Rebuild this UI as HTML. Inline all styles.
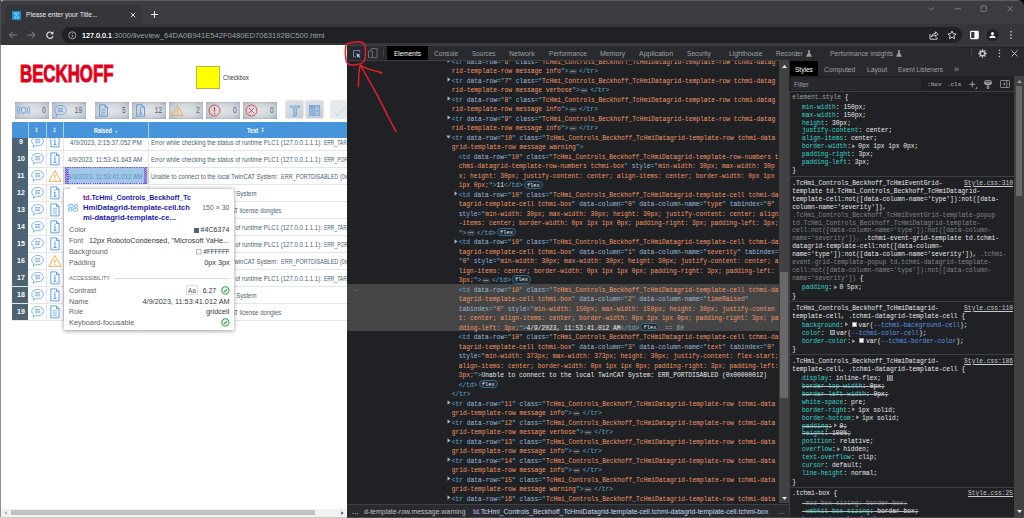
<!DOCTYPE html>
<html lang="en"><head><meta charset="utf-8"><title>Please enter your Title...</title>
<style>
html,body{margin:0;padding:0}
body{width:1024px;height:518px;overflow:hidden;position:relative;background:#202124;font-family:"Liberation Sans",sans-serif}
svg{display:block;overflow:visible}
span svg{display:block}
</style></head><body>
<div style="position:absolute;left:0.00px;top:0.00px;width:1024.00px;height:24.00px;background:#3a3c3f;"></div>
<div style="position:absolute;left:0.00px;top:24.00px;width:1024.00px;height:21.00px;background:#35363a;"></div>
<div style="position:absolute;left:0.00px;top:0.00px;width:1024.00px;height:1.00px;background:#5a5c5f;"></div>
<div style="position:absolute;left:5px;top:5px;width:137px;height:19px;background:#35363a;border-radius:4px 4px 0 0"></div>
<svg style="position:absolute;left:12px;top:10.5px" width="9" height="9" viewBox="0 0 9 9"><rect width="9" height="9" rx="1" fill="#1697d8"/><path d="M2 2.2h5M2 6.8h5M2.2 2.5l2.3 2 2.3-2M2.2 6.5l2.3-2 2.3 2" stroke="#cfeaf8" stroke-width=".7" fill="none"/></svg>
<span style="position:absolute;left:26.00px;transform-origin:0 50%;top:11.41px;font:400 6.6px/8.58px 'Liberation Sans',sans-serif;color:#e8eaed;white-space:pre;transform:scaleX(1.005);">Please enter your Title...</span>
<svg style="position:absolute;left:130px;top:12px" width="6" height="6" viewBox="0 0 6 6"><path d="M.8.8l4.4 4.4M5.2.8L.8 5.2" stroke="#e8eaed" stroke-width=".9"/></svg>
<svg style="position:absolute;left:151px;top:11px" width="7" height="7" viewBox="0 0 7 7"><path d="M3.5 0v7M0 3.5h7" stroke="#e8eaed" stroke-width="1"/></svg>
<svg style="position:absolute;left:926px;top:4px" width="92" height="10" viewBox="0 0 92 10"><g stroke="#8e9093" stroke-width=".8" fill="none"><path d="M2.5 3.5l2.8 2.6 2.8-2.6"/><path d="M29 4.8h6"/><rect x="55" y="2" width="5.4" height="5.4" rx=".8"/><path d="M81.5 2l5.4 5.4M86.900 2l-5.4 5.4"/></g></svg>
<svg style="position:absolute;left:8px;top:30px" width="50" height="10" viewBox="0 0 50 10"><g stroke="#85878a" stroke-width="1" fill="none"><path d="M9 5H1.600M4.800 1.600L1.500 5l3.300 3.400"/><path d="M19.500 5h7.400M23.700 1.600L27 5l-3.300 3.400"/></g><g stroke="#e8eaed" stroke-width="1.100" fill="none"><path d="M44.600 3.300A3.200 3.200 0 1 0 45 6.300"/></g><path d="M45.400 1.300v3h-3z" fill="#e8eaed"/></svg>
<div style="position:absolute;left:62px;top:26.7px;width:900px;height:16px;background:#202124;border-radius:8px"></div>
<svg style="position:absolute;left:67.600px;top:30.500px" width="8.600" height="8.600" viewBox="0 0 7 7"><circle cx="3.500" cy="3.500" r="2.900" stroke="#c4c7ca" stroke-width=".6" fill="none"/><path d="M3.500 3.100v2M3.500 1.700v.7" stroke="#c4c7ca" stroke-width=".7"/></svg>
<span style="position:absolute;left:82.00px;transform-origin:0 50%;top:31.35px;font:400 7.0px/9.1px 'Liberation Sans',sans-serif;color:#ffffff;white-space:pre;transform:scaleX(1.028);text-shadow:0 0 .3px #fff">127.0.0.1</span>
<span style="position:absolute;left:112.00px;transform-origin:0 50%;top:31.35px;font:400 7.0px/9.1px 'Liberation Sans',sans-serif;color:#9aa0a6;white-space:pre;transform:scaleX(1.088);">:3000/liveview_64DA0B941E542F0480ED7063192BC500.html</span>
<svg style="position:absolute;left:927px;top:29px" width="92" height="12" viewBox="0 0 92 12"><g stroke="#dfe1e4" stroke-width=".9" fill="none"><path d="M3 5v5.200h7V8.500"/><path d="M4.300 8c.5-2.400 2-3.400 4.200-3.500V2.800L11 5.300 8.500 7.700V6.100c-1.800 0-3.100.6-4.200 1.900z"/><path d="M25 2l1.200 2.700 2.900.3-2.200 1.900.7 2.800L25 8.200l-2.600 1.500.7-2.800L20.900 5l2.900-.3z"/></g><rect x="43.600" y="2.400" width="7.600" height="7.200" rx=".8" fill="none" stroke="#fff" stroke-width="1.100"/><rect x="47.400" y="2.400" width="3.800" height="7.200" fill="#fff"/><circle cx="65.500" cy="6" r="6.100" fill="#202124"/><circle cx="65.500" cy="4.500" r="1.500" fill="#fff"/><path d="M62.300 9c0-1.600 1.400-2.500 3.200-2.500s3.200.9 3.200 2.500z" fill="#fff"/><circle cx="84" cy="2.800" r=".8" fill="#e8eaed"/><circle cx="84" cy="6" r=".8" fill="#e8eaed"/><circle cx="84" cy="9.200" r=".8" fill="#e8eaed"/></svg>
<svg style="position:absolute;left:0;top:0" width="5" height="5" viewBox="0 0 5 5"><path d="M0 0h5A5 5 0 0 0 0 5z" fill="#b9b9b9"/></svg>
<svg style="position:absolute;left:1018px;top:0" width="6" height="6" viewBox="0 0 6 6"><path d="M0 0h6v6A6 6 0 0 0 0 0z" fill="#000"/></svg>
<div style="position:absolute;left:0.00px;top:45.00px;width:347.30px;height:473.00px;background:#fff;"></div>
<div style="position:absolute;left:0.00px;top:45.00px;width:1.00px;height:473.00px;background:#8f9193;"></div>
<div style="position:absolute;left:0.00px;top:0.00px;width:1.00px;height:45.00px;background:#4a4c4f;"></div>
<span style="position:absolute;left:20.00px;transform-origin:0 50%;top:58.93px;font:700 23.8px/30.94px 'Liberation Sans',sans-serif;color:#e2001a;white-space:pre;transform:scaleX(0.707);-webkit-text-stroke:1px #e2001a">BECKHOFF</span>
<div style="position:absolute;left:195.900px;top:65.600px;width:23.900px;height:23.900px;box-sizing:border-box;background:#ffff00;border:1px solid #b5b53a"></div>
<span style="position:absolute;left:222.80px;transform-origin:0 50%;top:74.41px;font:400 6.75px/8.78px 'Liberation Sans',sans-serif;color:#333;white-space:pre;transform:scaleX(0.860);">Checkbox</span>
<div style="position:absolute;left:15px;top:101.600px;width:34px;height:17.100px;background:radial-gradient(ellipse at 50% 50%,#e1e5ea 0%,#d2d7dd 50%,#b0b7c0 100%);box-shadow:inset 0 0 1.500px rgba(80,90,100,.5)"></div>
<span style="position:absolute;left:45.50px;top:105.87px;width:0;height:0"><span style="position:absolute;right:0;top:0;transform-origin:100% 50%;font:400 8.2px/10.66px 'Liberation Sans',sans-serif;color:#4c6374;white-space:pre;transform:scaleX(0.800);">0</span></span>
<svg style="position:absolute;left:16.2px;top:102.500px" width="15" height="15" viewBox="0 0 14 14"><g stroke="#4a8fd8" stroke-width=".7" fill="none"><rect x="5" y="4" width="4" height="5.500" rx="1.600"/><path d="M7 9.500v1M3.900 4.200c-.9 1.600-.9 3.700 0 5.300M2.300 3.200c-1.400 2.300-1.400 5.100 0 7.400M10.100 4.200c.9 1.600.9 3.700 0 5.300M11.700 3.200c1.400 2.300 1.400 5.100 0 7.400"/></g></svg>
<div style="position:absolute;left:52px;top:101.600px;width:34px;height:17.100px;background:radial-gradient(ellipse at 50% 50%,#e1e5ea 0%,#d2d7dd 50%,#b0b7c0 100%);box-shadow:inset 0 0 1.500px rgba(80,90,100,.5)"></div>
<span style="position:absolute;left:82.50px;top:105.87px;width:0;height:0"><span style="position:absolute;right:0;top:0;transform-origin:100% 50%;font:400 8.2px/10.66px 'Liberation Sans',sans-serif;color:#4c6374;white-space:pre;transform:scaleX(0.800);">19</span></span>
<svg style="position:absolute;left:53.2px;top:102.500px" width="15" height="15" viewBox="0 0 14 14"><g stroke="#4a8fd8" stroke-width=".62" fill="none"><path d="M7 2.300c3.100 0 5.400 1.900 5.400 4.300S10.100 10.900 7 10.900c-.7 0-1.400-.1-2-.3L3 12.200l.3-2.300C2.200 9.100 1.600 7.900 1.600 6.600 1.600 4.200 3.900 2.300 7 2.300z"/><path d="M4.600 5.100h4.800M4.600 6.600h4.800M4.600 8.100h4.800"/></g></svg>
<div style="position:absolute;left:95px;top:101.600px;width:34px;height:17.100px;background:radial-gradient(ellipse at 50% 50%,#e1e5ea 0%,#d2d7dd 50%,#b0b7c0 100%);box-shadow:inset 0 0 1.500px rgba(80,90,100,.5)"></div>
<span style="position:absolute;left:125.50px;top:105.87px;width:0;height:0"><span style="position:absolute;right:0;top:0;transform-origin:100% 50%;font:400 8.2px/10.66px 'Liberation Sans',sans-serif;color:#4c6374;white-space:pre;transform:scaleX(0.800);">5</span></span>
<svg style="position:absolute;left:96.2px;top:102.500px" width="15" height="15" viewBox="0 0 14 14"><g stroke="#4a8fd8" stroke-width=".75" fill="none"><path d="M3.400 1.700h5l2.300 2.300v8.300H3.400z"/><path d="M8.400 1.700V4h2.300"/><path d="M5 5.600h4M5 7.200h4M5 8.800h4M5 10.400h4" stroke-width=".5"/></g></svg>
<div style="position:absolute;left:132px;top:101.600px;width:34px;height:17.100px;background:radial-gradient(ellipse at 50% 50%,#e1e5ea 0%,#d2d7dd 50%,#b0b7c0 100%);box-shadow:inset 0 0 1.500px rgba(80,90,100,.5)"></div>
<span style="position:absolute;left:162.50px;top:105.87px;width:0;height:0"><span style="position:absolute;right:0;top:0;transform-origin:100% 50%;font:400 8.2px/10.66px 'Liberation Sans',sans-serif;color:#4c6374;white-space:pre;transform:scaleX(0.800);">12</span></span>
<svg style="position:absolute;left:133.2px;top:102.500px" width="15" height="15" viewBox="0 0 14 14"><g stroke="#4a8fd8" stroke-width=".75" fill="none"><path d="M3.400 1.700h5l2.300 2.300v8.300H3.400z"/><path d="M8.400 1.700V4h2.300"/><path d="M7.100 6.300v3.700M5.900 6.400h1.200M5.700 10.100h2.800" stroke-width=".8"/><circle cx="7" cy="4.600" r=".6" fill="#4a8fd8" stroke="none"/></g></svg>
<div style="position:absolute;left:169px;top:101.600px;width:34px;height:17.100px;background:radial-gradient(ellipse at 50% 50%,#e1e5ea 0%,#d2d7dd 50%,#b0b7c0 100%);box-shadow:inset 0 0 1.500px rgba(80,90,100,.5)"></div>
<span style="position:absolute;left:199.50px;top:105.87px;width:0;height:0"><span style="position:absolute;right:0;top:0;transform-origin:100% 50%;font:400 8.2px/10.66px 'Liberation Sans',sans-serif;color:#4c6374;white-space:pre;transform:scaleX(0.800);">2</span></span>
<svg style="position:absolute;left:170.2px;top:102.500px" width="15" height="15" viewBox="0 0 14 14"><g stroke="#f0a030" stroke-width=".75" fill="none"><path d="M7 2.200l5.400 9.600H1.600z" stroke-linejoin="round"/><path d="M7 5.600v3.300M7 9.700v.9" stroke-width=".85"/></g></svg>
<div style="position:absolute;left:206px;top:101.600px;width:34px;height:17.100px;background:radial-gradient(ellipse at 50% 50%,#e1e5ea 0%,#d2d7dd 50%,#b0b7c0 100%);box-shadow:inset 0 0 1.500px rgba(80,90,100,.5)"></div>
<span style="position:absolute;left:236.50px;top:105.87px;width:0;height:0"><span style="position:absolute;right:0;top:0;transform-origin:100% 50%;font:400 8.2px/10.66px 'Liberation Sans',sans-serif;color:#4c6374;white-space:pre;transform:scaleX(0.800);">0</span></span>
<svg style="position:absolute;left:207.2px;top:102.500px" width="15" height="15" viewBox="0 0 14 14"><g stroke="#e03030" stroke-width=".8" fill="none"><circle cx="7" cy="7" r="5.100"/><path d="M7 3.800v4.100M7 9.100v1.100" stroke-width="1"/></g></svg>
<div style="position:absolute;left:243px;top:101.600px;width:34px;height:17.100px;background:radial-gradient(ellipse at 50% 50%,#e1e5ea 0%,#d2d7dd 50%,#b0b7c0 100%);box-shadow:inset 0 0 1.500px rgba(80,90,100,.5)"></div>
<span style="position:absolute;left:273.50px;top:105.87px;width:0;height:0"><span style="position:absolute;right:0;top:0;transform-origin:100% 50%;font:400 8.2px/10.66px 'Liberation Sans',sans-serif;color:#4c6374;white-space:pre;transform:scaleX(0.800);">0</span></span>
<svg style="position:absolute;left:244.2px;top:102.500px" width="15" height="15" viewBox="0 0 14 14"><g stroke="#e03030" stroke-width=".8" fill="none"><circle cx="7" cy="7" r="5.100"/><path d="M4.700 4.700l4.600 4.600M9.300 4.700L4.700 9.300"/></g></svg>
<div style="position:absolute;left:285.7px;top:101.300px;width:17.400px;height:17.200px;background:linear-gradient(160deg,#dde1e6,#d3d8de 55%,#c6ccd4);border-radius:1px;box-shadow:0 0 1.700px rgba(50,60,70,.55)"></div>
<svg style="position:absolute;left:287.9px;top:103.900px" width="13" height="13" viewBox="0 0 13 13"><path d="M1.600 2.100H12.300L8.400 5.300V11.500L5.600 12.700V5.300z" stroke="#4a8fd8" stroke-width=".55" fill="rgba(74,143,216,.28)" stroke-linejoin="round"/></svg>
<div style="position:absolute;left:305.8px;top:101.300px;width:17.400px;height:17.200px;background:linear-gradient(160deg,#dde1e6,#d3d8de 55%,#c6ccd4);border-radius:1px;box-shadow:0 0 1.700px rgba(50,60,70,.55)"></div>
<svg style="position:absolute;left:308.0px;top:103.900px" width="13" height="13" viewBox="0 0 13 13"><g stroke="#4a8fd8" stroke-width=".55" fill="none"><rect x="1.400" y="1.400" width="10.400" height="9.800" fill="rgba(74,143,216,.22)"/><path d="M1.400 3h10.400M3.100 1.400v9.800M4.800 1.400v9.800M6.500 1.400v9.800M9.100 5.500v3M7.600 7h3"/></g></svg>
<div style="position:absolute;left:331.200px;top:101.300px;width:17px;height:17.200px;background:#e7eaed;box-shadow:0 0 1.700px rgba(50,60,70,.35)"></div>
<svg style="position:absolute;left:333px;top:103.600px" width="14" height="13" viewBox="0 0 14 13"><path d="M1.800 8.200l2.800 3.500 7.800-9.400" stroke="#a9cbee" stroke-width=".7" fill="none"/></svg>
<div style="position:absolute;left:0;top:0;width:347.300px;height:518px;overflow:hidden">
<div style="position:absolute;left:12.00px;top:133.16px;width:16.30px;height:16.44px;background:#4c6374;"></div>
<span style="position:absolute;left:18.54px;transform-origin:0 50%;top:136.88px;font:700 8.0px/10.4px 'Liberation Sans',sans-serif;color:#fff;white-space:pre;transform:scaleX(0.880);">9</span>
<div style="position:absolute;left:12.00px;top:149.60px;width:336.00px;height:0.60px;background:#e3e6ea;"></div>
<div style="position:absolute;left:45.50px;top:133.16px;width:0.60px;height:17.04px;background:#e3e6ea;"></div>
<div style="position:absolute;left:62.90px;top:133.16px;width:0.60px;height:17.04px;background:#e3e6ea;"></div>
<div style="position:absolute;left:148.20px;top:133.16px;width:0.60px;height:17.04px;background:#e3e6ea;"></div>
<svg style="position:absolute;left:30.20px;top:133.78px" width="15.200" height="15.200" viewBox="0 0 14 14"><g stroke="#4a8fd8" stroke-width=".62" fill="none"><path d="M7 2.300c3.100 0 5.400 1.900 5.400 4.300S10.100 10.900 7 10.900c-.7 0-1.400-.1-2-.3L3 12.200l.3-2.300C2.200 9.100 1.600 7.900 1.600 6.600 1.600 4.200 3.900 2.300 7 2.300z"/><path d="M4.600 5.100h4.800M4.600 6.600h4.800M4.600 8.100h4.800"/></g></svg>
<svg style="position:absolute;left:47.30px;top:133.48px" width="15.800" height="15.800" viewBox="0 0 14 14"><g stroke="#4a8fd8" stroke-width=".75" fill="none"><path d="M3.400 1.700h5l2.300 2.300v8.300H3.400z"/><path d="M8.400 1.700V4h2.300"/><path d="M7.100 6.300v3.700M5.900 6.400h1.200M5.700 10.100h2.800" stroke-width=".8"/><circle cx="7" cy="4.600" r=".6" fill="#4a8fd8" stroke="none"/></g></svg>
<span style="position:absolute;left:69.68px;transform-origin:0 50%;top:137.53px;font:400 7.0px/9.1px 'Liberation Sans',sans-serif;color:#4c6374;white-space:pre;transform:scaleX(0.889);">4/9/2023, 2:15:37.052 PM</span>
<span style="position:absolute;left:151.20px;transform-origin:0 50%;top:137.53px;font:400 7.0px/9.1px 'Liberation Sans',sans-serif;color:#4c6374;white-space:pre;transform:scaleX(0.866);">Error while checking the status of runtime PLC1 (127.0.0.1.1.1):</span>
<span style="position:absolute;left:324.40px;transform-origin:0 50%;top:137.53px;font:400 7.0px/9.1px 'Liberation Sans',sans-serif;color:#4c6374;white-space:pre;transform:scaleX(0.706);">ERR_TARGETPORTNOTFOUND (0x00000006)</span>
<div style="position:absolute;left:12.00px;top:150.20px;width:16.30px;height:16.44px;background:#4c6374;"></div>
<span style="position:absolute;left:16.58px;transform-origin:0 50%;top:153.92px;font:700 8.0px/10.4px 'Liberation Sans',sans-serif;color:#fff;white-space:pre;transform:scaleX(0.880);">10</span>
<div style="position:absolute;left:12.00px;top:166.64px;width:336.00px;height:0.60px;background:#e3e6ea;"></div>
<div style="position:absolute;left:45.50px;top:150.20px;width:0.60px;height:17.04px;background:#e3e6ea;"></div>
<div style="position:absolute;left:62.90px;top:150.20px;width:0.60px;height:17.04px;background:#e3e6ea;"></div>
<div style="position:absolute;left:148.20px;top:150.20px;width:0.60px;height:17.04px;background:#e3e6ea;"></div>
<svg style="position:absolute;left:30.20px;top:150.82px" width="15.200" height="15.200" viewBox="0 0 14 14"><g stroke="#4a8fd8" stroke-width=".62" fill="none"><path d="M7 2.300c3.100 0 5.400 1.900 5.400 4.300S10.100 10.900 7 10.900c-.7 0-1.400-.1-2-.3L3 12.200l.3-2.300C2.200 9.100 1.600 7.900 1.600 6.600 1.600 4.200 3.900 2.300 7 2.300z"/><path d="M4.600 5.100h4.800M4.600 6.600h4.800M4.600 8.100h4.800"/></g></svg>
<svg style="position:absolute;left:47.30px;top:150.52px" width="15.800" height="15.800" viewBox="0 0 14 14"><g stroke="#4a8fd8" stroke-width=".75" fill="none"><path d="M3.400 1.700h5l2.300 2.300v8.300H3.400z"/><path d="M8.400 1.700V4h2.300"/><path d="M7.100 6.300v3.700M5.900 6.400h1.200M5.700 10.100h2.800" stroke-width=".8"/><circle cx="7" cy="4.600" r=".6" fill="#4a8fd8" stroke="none"/></g></svg>
<span style="position:absolute;left:68.35px;transform-origin:0 50%;top:154.57px;font:400 7.0px/9.1px 'Liberation Sans',sans-serif;color:#4c6374;white-space:pre;transform:scaleX(0.889);">4/9/2023, 11:53:41.643 AM</span>
<span style="position:absolute;left:151.20px;transform-origin:0 50%;top:154.57px;font:400 7.0px/9.1px 'Liberation Sans',sans-serif;color:#4c6374;white-space:pre;transform:scaleX(0.866);">Error while checking the status of runtime PLC1 (127.0.0.1.1.1):</span>
<span style="position:absolute;left:324.40px;transform-origin:0 50%;top:154.57px;font:400 7.0px/9.1px 'Liberation Sans',sans-serif;color:#4c6374;white-space:pre;transform:scaleX(0.706);">ERR_PORTDISABLED (0x00000012)</span>
<div style="position:absolute;left:12.00px;top:167.24px;width:16.30px;height:16.44px;background:#4c6374;"></div>
<span style="position:absolute;left:16.78px;transform-origin:0 50%;top:170.96px;font:700 8.0px/10.4px 'Liberation Sans',sans-serif;color:#fff;white-space:pre;transform:scaleX(0.880);">11</span>
<div style="position:absolute;left:12.00px;top:183.68px;width:336.00px;height:0.60px;background:#e3e6ea;"></div>
<div style="position:absolute;left:45.50px;top:167.24px;width:0.60px;height:17.04px;background:#e3e6ea;"></div>
<div style="position:absolute;left:62.90px;top:167.24px;width:0.60px;height:17.04px;background:#e3e6ea;"></div>
<div style="position:absolute;left:148.20px;top:167.24px;width:0.60px;height:17.04px;background:#e3e6ea;"></div>
<svg style="position:absolute;left:30.20px;top:167.86px" width="15.200" height="15.200" viewBox="0 0 14 14"><g stroke="#4a8fd8" stroke-width=".62" fill="none"><path d="M7 2.300c3.100 0 5.400 1.900 5.400 4.300S10.100 10.900 7 10.900c-.7 0-1.400-.1-2-.3L3 12.200l.3-2.300C2.200 9.100 1.600 7.900 1.600 6.600 1.600 4.200 3.900 2.300 7 2.300z"/><path d="M4.600 5.100h4.800M4.600 6.600h4.800M4.600 8.100h4.800"/></g></svg>
<svg style="position:absolute;left:47.30px;top:167.56px" width="15.800" height="15.800" viewBox="0 0 14 14"><g stroke="#f0a030" stroke-width=".75" fill="none"><path d="M7 2.200l5.400 9.600H1.600z" stroke-linejoin="round"/><path d="M7 5.600v3.300M7 9.700v.9" stroke-width=".85"/></g></svg>
<span style="position:absolute;left:68.35px;transform-origin:0 50%;top:171.61px;font:400 7.0px/9.1px 'Liberation Sans',sans-serif;color:#4c6374;white-space:pre;transform:scaleX(0.889);">4/9/2023, 11:53:41.012 AM</span>
<span style="position:absolute;left:151.20px;transform-origin:0 50%;top:171.61px;font:400 7.0px/9.1px 'Liberation Sans',sans-serif;color:#4c6374;white-space:pre;transform:scaleX(0.852);">Unable to connect to the local TwinCAT System:</span>
<span style="position:absolute;left:280.70px;transform-origin:0 50%;top:171.61px;font:400 7.0px/9.1px 'Liberation Sans',sans-serif;color:#4c6374;white-space:pre;transform:scaleX(0.790);">ERR_PORTDISABLED (0x00000012)</span>
<div style="position:absolute;left:12.00px;top:184.28px;width:16.30px;height:16.44px;background:#4c6374;"></div>
<span style="position:absolute;left:16.58px;transform-origin:0 50%;top:188.00px;font:700 8.0px/10.4px 'Liberation Sans',sans-serif;color:#fff;white-space:pre;transform:scaleX(0.880);">12</span>
<div style="position:absolute;left:12.00px;top:200.72px;width:336.00px;height:0.60px;background:#e3e6ea;"></div>
<div style="position:absolute;left:45.50px;top:184.28px;width:0.60px;height:17.04px;background:#e3e6ea;"></div>
<div style="position:absolute;left:62.90px;top:184.28px;width:0.60px;height:17.04px;background:#e3e6ea;"></div>
<div style="position:absolute;left:148.20px;top:184.28px;width:0.60px;height:17.04px;background:#e3e6ea;"></div>
<svg style="position:absolute;left:30.20px;top:184.90px" width="15.200" height="15.200" viewBox="0 0 14 14"><g stroke="#4a8fd8" stroke-width=".62" fill="none"><path d="M7 2.300c3.100 0 5.400 1.900 5.400 4.300S10.100 10.900 7 10.900c-.7 0-1.400-.1-2-.3L3 12.200l.3-2.300C2.200 9.100 1.600 7.900 1.600 6.600 1.600 4.200 3.900 2.300 7 2.300z"/><path d="M4.600 5.100h4.800M4.600 6.600h4.800M4.600 8.100h4.800"/></g></svg>
<svg style="position:absolute;left:47.30px;top:184.60px" width="15.800" height="15.800" viewBox="0 0 14 14"><g stroke="#4a8fd8" stroke-width=".75" fill="none"><path d="M3.400 1.700h5l2.300 2.300v8.300H3.400z"/><path d="M8.400 1.700V4h2.300"/><path d="M7.100 6.300v3.700M5.900 6.400h1.200M5.700 10.100h2.800" stroke-width=".8"/><circle cx="7" cy="4.600" r=".6" fill="#4a8fd8" stroke="none"/></g></svg>
<span style="position:absolute;left:68.35px;transform-origin:0 50%;top:188.65px;font:400 7.0px/9.1px 'Liberation Sans',sans-serif;color:#4c6374;white-space:pre;transform:scaleX(0.889);">4/9/2023, 11:53:40.820 AM</span>
<span style="position:absolute;left:257.00px;top:188.65px;width:0;height:0"><span style="position:absolute;right:0;top:0;transform-origin:100% 50%;font:400 7.0px/9.1px 'Liberation Sans',sans-serif;color:#4c6374;white-space:pre;transform:scaleX(0.866);">Connected to the local TwinCAT System</span></span>
<div style="position:absolute;left:12.00px;top:201.32px;width:16.30px;height:16.44px;background:#4c6374;"></div>
<span style="position:absolute;left:16.58px;transform-origin:0 50%;top:205.04px;font:700 8.0px/10.4px 'Liberation Sans',sans-serif;color:#fff;white-space:pre;transform:scaleX(0.880);">13</span>
<div style="position:absolute;left:12.00px;top:217.76px;width:336.00px;height:0.60px;background:#e3e6ea;"></div>
<div style="position:absolute;left:45.50px;top:201.32px;width:0.60px;height:17.04px;background:#e3e6ea;"></div>
<div style="position:absolute;left:62.90px;top:201.32px;width:0.60px;height:17.04px;background:#e3e6ea;"></div>
<div style="position:absolute;left:148.20px;top:201.32px;width:0.60px;height:17.04px;background:#e3e6ea;"></div>
<svg style="position:absolute;left:30.20px;top:201.94px" width="15.200" height="15.200" viewBox="0 0 14 14"><g stroke="#4a8fd8" stroke-width=".62" fill="none"><path d="M7 2.300c3.100 0 5.400 1.900 5.400 4.300S10.100 10.900 7 10.900c-.7 0-1.400-.1-2-.3L3 12.200l.3-2.300C2.200 9.100 1.600 7.900 1.600 6.600 1.600 4.200 3.900 2.300 7 2.300z"/><path d="M4.600 5.100h4.800M4.600 6.600h4.800M4.600 8.100h4.800"/></g></svg>
<svg style="position:absolute;left:47.30px;top:201.64px" width="15.800" height="15.800" viewBox="0 0 14 14"><g stroke="#4a8fd8" stroke-width=".75" fill="none"><path d="M3.400 1.700h5l2.300 2.300v8.300H3.400z"/><path d="M8.400 1.700V4h2.300"/><path d="M5 5.600h4M5 7.200h4M5 8.800h4M5 10.400h4" stroke-width=".5"/></g></svg>
<span style="position:absolute;left:68.35px;transform-origin:0 50%;top:205.69px;font:400 7.0px/9.1px 'Liberation Sans',sans-serif;color:#4c6374;white-space:pre;transform:scaleX(0.889);">4/9/2023, 11:53:40.655 AM</span>
<span style="position:absolute;left:281.60px;top:205.69px;width:0;height:0"><span style="position:absolute;right:0;top:0;transform-origin:100% 50%;font:400 7.0px/9.1px 'Liberation Sans',sans-serif;color:#4c6374;white-space:pre;transform:scaleX(0.866);">Searching for TwinCAT license dongles</span></span>
<div style="position:absolute;left:12.00px;top:218.36px;width:16.30px;height:16.44px;background:#4c6374;"></div>
<span style="position:absolute;left:16.58px;transform-origin:0 50%;top:222.08px;font:700 8.0px/10.4px 'Liberation Sans',sans-serif;color:#fff;white-space:pre;transform:scaleX(0.880);">14</span>
<div style="position:absolute;left:12.00px;top:234.80px;width:336.00px;height:0.60px;background:#e3e6ea;"></div>
<div style="position:absolute;left:45.50px;top:218.36px;width:0.60px;height:17.04px;background:#e3e6ea;"></div>
<div style="position:absolute;left:62.90px;top:218.36px;width:0.60px;height:17.04px;background:#e3e6ea;"></div>
<div style="position:absolute;left:148.20px;top:218.36px;width:0.60px;height:17.04px;background:#e3e6ea;"></div>
<svg style="position:absolute;left:30.20px;top:218.98px" width="15.200" height="15.200" viewBox="0 0 14 14"><g stroke="#4a8fd8" stroke-width=".62" fill="none"><path d="M7 2.300c3.100 0 5.400 1.900 5.400 4.300S10.100 10.900 7 10.900c-.7 0-1.400-.1-2-.3L3 12.200l.3-2.300C2.200 9.100 1.600 7.900 1.600 6.600 1.600 4.200 3.900 2.300 7 2.300z"/><path d="M4.600 5.100h4.800M4.600 6.600h4.800M4.600 8.100h4.800"/></g></svg>
<svg style="position:absolute;left:47.30px;top:218.68px" width="15.800" height="15.800" viewBox="0 0 14 14"><g stroke="#4a8fd8" stroke-width=".75" fill="none"><path d="M3.400 1.700h5l2.300 2.300v8.300H3.400z"/><path d="M8.400 1.700V4h2.300"/><path d="M7.100 6.300v3.700M5.900 6.400h1.200M5.700 10.100h2.800" stroke-width=".8"/><circle cx="7" cy="4.600" r=".6" fill="#4a8fd8" stroke="none"/></g></svg>
<span style="position:absolute;left:68.58px;transform-origin:0 50%;top:222.73px;font:400 7.0px/9.1px 'Liberation Sans',sans-serif;color:#4c6374;white-space:pre;transform:scaleX(0.889);">4/9/2023, 11:53:11.643 AM</span>
<span style="position:absolute;left:151.20px;transform-origin:0 50%;top:222.73px;font:400 7.0px/9.1px 'Liberation Sans',sans-serif;color:#4c6374;white-space:pre;transform:scaleX(0.866);">Error while checking the status of runtime PLC1 (127.0.0.1.1.1):</span>
<span style="position:absolute;left:324.40px;transform-origin:0 50%;top:222.73px;font:400 7.0px/9.1px 'Liberation Sans',sans-serif;color:#4c6374;white-space:pre;transform:scaleX(0.706);">ERR_TARGETPORTNOTFOUND (0x00000006)</span>
<div style="position:absolute;left:12.00px;top:235.40px;width:16.30px;height:16.44px;background:#4c6374;"></div>
<span style="position:absolute;left:16.58px;transform-origin:0 50%;top:239.12px;font:700 8.0px/10.4px 'Liberation Sans',sans-serif;color:#fff;white-space:pre;transform:scaleX(0.880);">15</span>
<div style="position:absolute;left:12.00px;top:251.84px;width:336.00px;height:0.60px;background:#e3e6ea;"></div>
<div style="position:absolute;left:45.50px;top:235.40px;width:0.60px;height:17.04px;background:#e3e6ea;"></div>
<div style="position:absolute;left:62.90px;top:235.40px;width:0.60px;height:17.04px;background:#e3e6ea;"></div>
<div style="position:absolute;left:148.20px;top:235.40px;width:0.60px;height:17.04px;background:#e3e6ea;"></div>
<svg style="position:absolute;left:30.20px;top:236.02px" width="15.200" height="15.200" viewBox="0 0 14 14"><g stroke="#4a8fd8" stroke-width=".62" fill="none"><path d="M7 2.300c3.100 0 5.400 1.900 5.400 4.300S10.100 10.900 7 10.900c-.7 0-1.400-.1-2-.3L3 12.200l.3-2.300C2.200 9.100 1.600 7.900 1.600 6.600 1.600 4.200 3.900 2.300 7 2.300z"/><path d="M4.600 5.100h4.800M4.600 6.600h4.800M4.600 8.100h4.800"/></g></svg>
<svg style="position:absolute;left:47.30px;top:235.72px" width="15.800" height="15.800" viewBox="0 0 14 14"><g stroke="#4a8fd8" stroke-width=".75" fill="none"><path d="M3.400 1.700h5l2.300 2.300v8.300H3.400z"/><path d="M8.400 1.700V4h2.300"/><path d="M7.100 6.300v3.700M5.900 6.400h1.200M5.700 10.100h2.800" stroke-width=".8"/><circle cx="7" cy="4.600" r=".6" fill="#4a8fd8" stroke="none"/></g></svg>
<span style="position:absolute;left:68.58px;transform-origin:0 50%;top:239.77px;font:400 7.0px/9.1px 'Liberation Sans',sans-serif;color:#4c6374;white-space:pre;transform:scaleX(0.889);">4/9/2023, 11:53:11.012 AM</span>
<span style="position:absolute;left:151.20px;transform-origin:0 50%;top:239.77px;font:400 7.0px/9.1px 'Liberation Sans',sans-serif;color:#4c6374;white-space:pre;transform:scaleX(0.866);">Error while checking the status of runtime PLC1 (127.0.0.1.1.1):</span>
<span style="position:absolute;left:324.40px;transform-origin:0 50%;top:239.77px;font:400 7.0px/9.1px 'Liberation Sans',sans-serif;color:#4c6374;white-space:pre;transform:scaleX(0.706);">ERR_PORTDISABLED (0x00000012)</span>
<div style="position:absolute;left:12.00px;top:252.44px;width:16.30px;height:16.44px;background:#4c6374;"></div>
<span style="position:absolute;left:16.58px;transform-origin:0 50%;top:256.16px;font:700 8.0px/10.4px 'Liberation Sans',sans-serif;color:#fff;white-space:pre;transform:scaleX(0.880);">16</span>
<div style="position:absolute;left:12.00px;top:268.88px;width:336.00px;height:0.60px;background:#e3e6ea;"></div>
<div style="position:absolute;left:45.50px;top:252.44px;width:0.60px;height:17.04px;background:#e3e6ea;"></div>
<div style="position:absolute;left:62.90px;top:252.44px;width:0.60px;height:17.04px;background:#e3e6ea;"></div>
<div style="position:absolute;left:148.20px;top:252.44px;width:0.60px;height:17.04px;background:#e3e6ea;"></div>
<svg style="position:absolute;left:30.20px;top:253.06px" width="15.200" height="15.200" viewBox="0 0 14 14"><g stroke="#4a8fd8" stroke-width=".62" fill="none"><path d="M7 2.300c3.100 0 5.400 1.900 5.400 4.300S10.100 10.900 7 10.900c-.7 0-1.400-.1-2-.3L3 12.200l.3-2.300C2.200 9.100 1.600 7.900 1.600 6.600 1.600 4.200 3.900 2.300 7 2.300z"/><path d="M4.600 5.100h4.800M4.600 6.600h4.800M4.600 8.100h4.800"/></g></svg>
<svg style="position:absolute;left:47.30px;top:252.76px" width="15.800" height="15.800" viewBox="0 0 14 14"><g stroke="#f0a030" stroke-width=".75" fill="none"><path d="M7 2.200l5.400 9.600H1.600z" stroke-linejoin="round"/><path d="M7 5.600v3.300M7 9.700v.9" stroke-width=".85"/></g></svg>
<span style="position:absolute;left:68.35px;transform-origin:0 50%;top:256.81px;font:400 7.0px/9.1px 'Liberation Sans',sans-serif;color:#4c6374;white-space:pre;transform:scaleX(0.889);">4/9/2023, 11:53:10.820 AM</span>
<span style="position:absolute;left:151.20px;transform-origin:0 50%;top:256.81px;font:400 7.0px/9.1px 'Liberation Sans',sans-serif;color:#4c6374;white-space:pre;transform:scaleX(0.852);">Unable to connect to the local TwinCAT System:</span>
<span style="position:absolute;left:280.70px;transform-origin:0 50%;top:256.81px;font:400 7.0px/9.1px 'Liberation Sans',sans-serif;color:#4c6374;white-space:pre;transform:scaleX(0.790);">ERR_PORTDISABLED (0x00000012)</span>
<div style="position:absolute;left:12.00px;top:269.48px;width:16.30px;height:16.44px;background:#4c6374;"></div>
<span style="position:absolute;left:16.58px;transform-origin:0 50%;top:273.20px;font:700 8.0px/10.4px 'Liberation Sans',sans-serif;color:#fff;white-space:pre;transform:scaleX(0.880);">17</span>
<div style="position:absolute;left:12.00px;top:285.92px;width:336.00px;height:0.60px;background:#e3e6ea;"></div>
<div style="position:absolute;left:45.50px;top:269.48px;width:0.60px;height:17.04px;background:#e3e6ea;"></div>
<div style="position:absolute;left:62.90px;top:269.48px;width:0.60px;height:17.04px;background:#e3e6ea;"></div>
<div style="position:absolute;left:148.20px;top:269.48px;width:0.60px;height:17.04px;background:#e3e6ea;"></div>
<svg style="position:absolute;left:30.20px;top:270.10px" width="15.200" height="15.200" viewBox="0 0 14 14"><g stroke="#4a8fd8" stroke-width=".62" fill="none"><path d="M7 2.300c3.100 0 5.400 1.900 5.400 4.300S10.100 10.900 7 10.900c-.7 0-1.400-.1-2-.3L3 12.200l.3-2.300C2.200 9.100 1.600 7.900 1.600 6.600 1.600 4.200 3.900 2.300 7 2.300z"/><path d="M4.600 5.100h4.800M4.600 6.600h4.800M4.600 8.100h4.800"/></g></svg>
<svg style="position:absolute;left:47.30px;top:269.80px" width="15.800" height="15.800" viewBox="0 0 14 14"><g stroke="#4a8fd8" stroke-width=".75" fill="none"><path d="M3.400 1.700h5l2.300 2.300v8.300H3.400z"/><path d="M8.400 1.700V4h2.300"/><path d="M7.100 6.300v3.700M5.900 6.400h1.200M5.700 10.100h2.800" stroke-width=".8"/><circle cx="7" cy="4.600" r=".6" fill="#4a8fd8" stroke="none"/></g></svg>
<span style="position:absolute;left:68.35px;transform-origin:0 50%;top:273.85px;font:400 7.0px/9.1px 'Liberation Sans',sans-serif;color:#4c6374;white-space:pre;transform:scaleX(0.889);">4/9/2023, 11:52:41.643 AM</span>
<span style="position:absolute;left:151.20px;transform-origin:0 50%;top:273.85px;font:400 7.0px/9.1px 'Liberation Sans',sans-serif;color:#4c6374;white-space:pre;transform:scaleX(0.866);">Error while checking the status of runtime PLC1 (127.0.0.1.1.1):</span>
<span style="position:absolute;left:324.40px;transform-origin:0 50%;top:273.85px;font:400 7.0px/9.1px 'Liberation Sans',sans-serif;color:#4c6374;white-space:pre;transform:scaleX(0.706);">ERR_TARGETPORTNOTFOUND (0x00000006)</span>
<div style="position:absolute;left:12.00px;top:286.52px;width:16.30px;height:16.44px;background:#4c6374;"></div>
<span style="position:absolute;left:16.58px;transform-origin:0 50%;top:290.24px;font:700 8.0px/10.4px 'Liberation Sans',sans-serif;color:#fff;white-space:pre;transform:scaleX(0.880);">18</span>
<div style="position:absolute;left:12.00px;top:302.96px;width:336.00px;height:0.60px;background:#e3e6ea;"></div>
<div style="position:absolute;left:45.50px;top:286.52px;width:0.60px;height:17.04px;background:#e3e6ea;"></div>
<div style="position:absolute;left:62.90px;top:286.52px;width:0.60px;height:17.04px;background:#e3e6ea;"></div>
<div style="position:absolute;left:148.20px;top:286.52px;width:0.60px;height:17.04px;background:#e3e6ea;"></div>
<svg style="position:absolute;left:30.20px;top:287.14px" width="15.200" height="15.200" viewBox="0 0 14 14"><g stroke="#4a8fd8" stroke-width=".62" fill="none"><path d="M7 2.300c3.100 0 5.400 1.900 5.400 4.300S10.100 10.900 7 10.900c-.7 0-1.400-.1-2-.3L3 12.200l.3-2.300C2.200 9.100 1.600 7.900 1.600 6.600 1.600 4.200 3.900 2.300 7 2.300z"/><path d="M4.600 5.100h4.800M4.600 6.600h4.800M4.600 8.100h4.800"/></g></svg>
<svg style="position:absolute;left:47.30px;top:286.84px" width="15.800" height="15.800" viewBox="0 0 14 14"><g stroke="#4a8fd8" stroke-width=".75" fill="none"><path d="M3.400 1.700h5l2.300 2.300v8.300H3.400z"/><path d="M8.400 1.700V4h2.300"/><path d="M7.100 6.300v3.700M5.900 6.400h1.200M5.700 10.100h2.800" stroke-width=".8"/><circle cx="7" cy="4.600" r=".6" fill="#4a8fd8" stroke="none"/></g></svg>
<span style="position:absolute;left:68.35px;transform-origin:0 50%;top:290.89px;font:400 7.0px/9.1px 'Liberation Sans',sans-serif;color:#4c6374;white-space:pre;transform:scaleX(0.889);">4/9/2023, 11:52:41.012 AM</span>
<span style="position:absolute;left:257.00px;top:290.89px;width:0;height:0"><span style="position:absolute;right:0;top:0;transform-origin:100% 50%;font:400 7.0px/9.1px 'Liberation Sans',sans-serif;color:#4c6374;white-space:pre;transform:scaleX(0.866);">Connected to the local TwinCAT System</span></span>
<div style="position:absolute;left:12.00px;top:303.56px;width:16.30px;height:16.44px;background:#4c6374;"></div>
<span style="position:absolute;left:16.58px;transform-origin:0 50%;top:307.28px;font:700 8.0px/10.4px 'Liberation Sans',sans-serif;color:#fff;white-space:pre;transform:scaleX(0.880);">19</span>
<div style="position:absolute;left:12.00px;top:320.00px;width:336.00px;height:0.60px;background:#e3e6ea;"></div>
<div style="position:absolute;left:45.50px;top:303.56px;width:0.60px;height:17.04px;background:#e3e6ea;"></div>
<div style="position:absolute;left:62.90px;top:303.56px;width:0.60px;height:17.04px;background:#e3e6ea;"></div>
<div style="position:absolute;left:148.20px;top:303.56px;width:0.60px;height:17.04px;background:#e3e6ea;"></div>
<svg style="position:absolute;left:30.20px;top:304.18px" width="15.200" height="15.200" viewBox="0 0 14 14"><g stroke="#4a8fd8" stroke-width=".62" fill="none"><path d="M7 2.300c3.100 0 5.400 1.900 5.400 4.300S10.100 10.900 7 10.900c-.7 0-1.400-.1-2-.3L3 12.200l.3-2.300C2.200 9.100 1.600 7.900 1.600 6.600 1.600 4.200 3.900 2.300 7 2.300z"/><path d="M4.600 5.100h4.800M4.600 6.600h4.800M4.600 8.100h4.800"/></g></svg>
<svg style="position:absolute;left:47.30px;top:303.88px" width="15.800" height="15.800" viewBox="0 0 14 14"><g stroke="#4a8fd8" stroke-width=".75" fill="none"><path d="M3.400 1.700h5l2.300 2.300v8.300H3.400z"/><path d="M8.400 1.700V4h2.300"/><path d="M5 5.600h4M5 7.200h4M5 8.800h4M5 10.400h4" stroke-width=".5"/></g></svg>
<span style="position:absolute;left:68.35px;transform-origin:0 50%;top:307.93px;font:400 7.0px/9.1px 'Liberation Sans',sans-serif;color:#4c6374;white-space:pre;transform:scaleX(0.889);">4/9/2023, 11:52:40.820 AM</span>
<span style="position:absolute;left:281.60px;top:307.93px;width:0;height:0"><span style="position:absolute;right:0;top:0;transform-origin:100% 50%;font:400 7.0px/9.1px 'Liberation Sans',sans-serif;color:#4c6374;white-space:pre;transform:scaleX(0.866);">Searching for TwinCAT license dongles</span></span>
<div style="position:absolute;left:12.00px;top:121.60px;width:336.00px;height:16.40px;background:#4794da;"></div>
<div style="position:absolute;left:28.30px;top:121.60px;width:0.70px;height:16.40px;background:#a9cdf0;"></div>
<div style="position:absolute;left:45.50px;top:121.60px;width:0.70px;height:16.40px;background:#a9cdf0;"></div>
<div style="position:absolute;left:62.90px;top:121.60px;width:0.70px;height:16.40px;background:#a9cdf0;"></div>
<div style="position:absolute;left:148.20px;top:121.60px;width:0.70px;height:16.40px;background:#a9cdf0;"></div>
<span style="position:absolute;left:94.20px;transform-origin:0 50%;top:127.01px;font:700 6.75px/8.78px 'Liberation Sans',sans-serif;color:#fff;white-space:pre;transform:scaleX(0.804);">Raised</span>
<svg style="position:absolute;left:114.600px;top:130.800px" width="2.800" height="1.900" viewBox="0 0 4 3"><path d="M0 .3h4L2 2.800z" fill="#fff"/></svg>
<span style="position:absolute;left:246.90px;transform-origin:0 50%;top:127.01px;font:700 6.75px/8.78px 'Liberation Sans',sans-serif;color:#fff;white-space:pre;transform:scaleX(0.837);">Text</span>
<svg style="position:absolute;left:35.3px;top:127.200px" width="3.200" height="5.800" viewBox="0 0 4 7"><path d="M2 .2l1.700 2.400H.3zM2 6.800L.3 4.400h3.400z" fill="#fff"/></svg>
<svg style="position:absolute;left:52.8px;top:127.200px" width="3.200" height="5.800" viewBox="0 0 4 7"><path d="M2 .2l1.700 2.400H.3zM2 6.800L.3 4.400h3.400z" fill="#fff"/></svg>
<svg style="position:absolute;left:260.9px;top:127.200px" width="3.200" height="5.800" viewBox="0 0 4 7"><path d="M2 .2l1.700 2.400H.3zM2 6.800L.3 4.400h3.400z" fill="#fff"/></svg>
<div style="position:absolute;left:63.200px;top:167px;width:1.500px;height:17.100px;background:rgba(160,200,130,.5)"></div>
<div style="position:absolute;left:147.300px;top:167px;width:1.500px;height:17.100px;background:rgba(160,200,130,.5)"></div>
<div style="position:absolute;left:64.700px;top:167px;width:82.600px;height:17.100px;background:rgba(111,168,220,.66)"></div>
<div style="position:absolute;left:64.700px;top:167.500px;width:3.600px;height:16.100px;background:repeating-linear-gradient(45deg,rgba(138,75,224,.95) 0 .8px,rgba(138,75,224,.35) .8px 1.600px)"></div>
<div style="position:absolute;left:143.700px;top:167.500px;width:3.600px;height:16.100px;background:repeating-linear-gradient(45deg,rgba(138,75,224,.95) 0 .8px,rgba(138,75,224,.35) .8px 1.600px)"></div>
<div style="position:absolute;left:64.700px;top:167px;width:82.600px;height:.9px;background:repeating-linear-gradient(90deg,#8a4be0 0 1.200px,transparent 1.200px 2.300px)"></div>
<div style="position:absolute;left:64.700px;top:183.200px;width:82.600px;height:.9px;background:repeating-linear-gradient(90deg,#8a4be0 0 1.200px,transparent 1.200px 2.300px)"></div>
<div style="position:absolute;left:64.700px;top:167px;width:.8px;height:17.100px;background:repeating-linear-gradient(180deg,#8a4be0 0 1.200px,transparent 1.200px 2.300px)"></div>
<div style="position:absolute;left:146.500px;top:167px;width:.8px;height:17.100px;background:repeating-linear-gradient(180deg,#8a4be0 0 1.200px,transparent 1.200px 2.300px)"></div>
<div style="position:absolute;left:68px;top:167px;width:.7px;height:17.100px;background:repeating-linear-gradient(180deg,#8a4be0 0 1.200px,transparent 1.200px 2.300px)"></div>
<div style="position:absolute;left:143.500px;top:167px;width:.7px;height:17.100px;background:repeating-linear-gradient(180deg,#8a4be0 0 1.200px,transparent 1.200px 2.300px)"></div>
<div style="position:absolute;left:63.500px;top:188.800px;width:170.600px;height:141px;background:#fff;border-radius:1.500px;box-shadow:0 .5px 4px rgba(0,0,0,.4)"></div>
<svg style="position:absolute;left:68.500px;top:184px" width="9" height="5.500" viewBox="0 0 9 5.500"><path d="M0 5.500L4.500 .5 9 5.500z" fill="#fff"/></svg>
<span style="position:absolute;left:83.40px;transform-origin:0 50%;top:194.01px;font:700 6.9px/8.97px 'Liberation Sans',sans-serif;color:#1a1aa6;white-space:pre;transform:scaleX(1.019);"><span style="color:#881280">td</span>.TcHmi_Controls_Beckhoff_Tc</span>
<span style="position:absolute;left:83.40px;transform-origin:0 50%;top:204.01px;font:700 6.9px/8.97px 'Liberation Sans',sans-serif;color:#1a1aa6;white-space:pre;transform:scaleX(1.094);">HmiDatagrid-template-cell.tch</span>
<span style="position:absolute;left:83.40px;transform-origin:0 50%;top:213.81px;font:700 6.9px/8.97px 'Liberation Sans',sans-serif;color:#1a1aa6;white-space:pre;transform:scaleX(1.108);">mi-datagrid-template-ce...</span>
<svg style="position:absolute;left:68px;top:204px" width="10" height="7.500" viewBox="0 0 10 7.500"><g stroke="#5b9fe8" stroke-width=".8" fill="none"><rect x=".5" y=".5" width="4.700" height="2.700" rx=".6"/><rect x="6.600" y=".5" width="2.900" height="2.700" rx=".6"/><rect x=".5" y="4.300" width="2.900" height="2.700" rx=".6"/><rect x="4.800" y="4.300" width="4.700" height="2.700" rx=".6"/></g></svg>
<span style="position:absolute;left:229.60px;top:204.11px;width:0;height:0"><span style="position:absolute;right:0;top:0;transform-origin:100% 50%;font:400 6.75px/8.78px 'Liberation Sans',sans-serif;color:#5f6368;white-space:pre;transform:scaleX(1.028);">150 × 30</span></span>
<span style="position:absolute;left:68.80px;transform-origin:0 50%;top:226.11px;font:400 6.75px/8.78px 'Liberation Sans',sans-serif;color:#5f6368;white-space:pre;transform:scaleX(1.066);">Color</span>
<span style="position:absolute;left:229.60px;top:226.11px;width:0;height:0"><span style="position:absolute;right:0;top:0;transform-origin:100% 50%;font:400 6.75px/8.78px 'Liberation Sans',sans-serif;color:#303942;white-space:pre;transform:scaleX(1.051);">#4C6374</span></span>
<div style="position:absolute;left:194.00px;top:227.80px;width:4.90px;height:4.90px;background:#4c6374;"></div>
<span style="position:absolute;left:68.80px;transform-origin:0 50%;top:237.01px;font:400 6.75px/8.78px 'Liberation Sans',sans-serif;color:#5f6368;white-space:pre;transform:scaleX(1.051);">Font</span>
<span style="position:absolute;left:229.60px;top:237.01px;width:0;height:0"><span style="position:absolute;right:0;top:0;transform-origin:100% 50%;font:400 6.75px/8.78px 'Liberation Sans',sans-serif;color:#303942;white-space:pre;transform:scaleX(1.077);">12px RobotoCondensed, "Microsoft YaHe...</span></span>
<span style="position:absolute;left:68.80px;transform-origin:0 50%;top:247.71px;font:400 6.75px/8.78px 'Liberation Sans',sans-serif;color:#5f6368;white-space:pre;transform:scaleX(1.077);">Background</span>
<span style="position:absolute;left:229.60px;top:247.71px;width:0;height:0"><span style="position:absolute;right:0;top:0;transform-origin:100% 50%;font:400 6.75px/8.78px 'Liberation Sans',sans-serif;color:#303942;white-space:pre;transform:scaleX(0.912);">#FFFFFF</span></span>
<svg style="position:absolute;left:196.400px;top:249.400px" width="5.400" height="5.400" viewBox="0 0 5.400 5.400"><rect x=".4" y=".4" width="4.600" height="4.600" fill="#fff" stroke="#8a8f95" stroke-width=".6"/></svg>
<span style="position:absolute;left:68.80px;transform-origin:0 50%;top:258.51px;font:400 6.75px/8.78px 'Liberation Sans',sans-serif;color:#5f6368;white-space:pre;transform:scaleX(1.062);">Padding</span>
<span style="position:absolute;left:229.60px;top:258.51px;width:0;height:0"><span style="position:absolute;right:0;top:0;transform-origin:100% 50%;font:400 6.75px/8.78px 'Liberation Sans',sans-serif;color:#303942;white-space:pre;transform:scaleX(1.079);">0px 3px</span></span>
<span style="position:absolute;left:68.80px;transform-origin:0 50%;top:275.19px;font:400 5.1px/6.63px 'Liberation Sans',sans-serif;color:#5f6368;white-space:pre;transform:scaleX(1.080);">ACCESSIBILITY</span>
<div style="position:absolute;left:113.50px;top:277.70px;width:116.00px;height:0.60px;background:#dadce0;"></div>
<span style="position:absolute;left:68.80px;transform-origin:0 50%;top:286.51px;font:400 6.75px/8.78px 'Liberation Sans',sans-serif;color:#5f6368;white-space:pre;transform:scaleX(1.070);">Contrast</span>
<div style="position:absolute;left:186.300px;top:285.300px;width:11.300px;height:9.300px;box-sizing:border-box;border:.6px solid #dadce0;border-radius:1px;background:#fff"></div>
<span style="position:absolute;left:188.30px;transform-origin:0 50%;top:286.29px;font:400 7.4px/9.62px 'Liberation Sans',sans-serif;color:#4c6374;white-space:pre;transform:scaleX(0.862);">Aa</span>
<span style="position:absolute;left:215.80px;top:286.51px;width:0;height:0"><span style="position:absolute;right:0;top:0;transform-origin:100% 50%;font:400 6.75px/8.78px 'Liberation Sans',sans-serif;color:#303942;white-space:pre;transform:scaleX(1.028);">6.27</span></span>
<svg style="position:absolute;left:220.700px;top:285.6px" width="8.800" height="8.800" viewBox="0 0 8.800 8.800"><circle cx="4.400" cy="4.400" r="3.600" stroke="#2ea640" stroke-width="1.050" fill="none"/><path d="M2.700 4.500l1.200 1.200 2.300-2.500" stroke="#2ea640" stroke-width="1.050" fill="none"/></svg>
<span style="position:absolute;left:68.80px;transform-origin:0 50%;top:297.91px;font:400 6.75px/8.78px 'Liberation Sans',sans-serif;color:#5f6368;white-space:pre;transform:scaleX(1.083);">Name</span>
<span style="position:absolute;left:229.60px;top:297.91px;width:0;height:0"><span style="position:absolute;right:0;top:0;transform-origin:100% 50%;font:400 6.75px/8.78px 'Liberation Sans',sans-serif;color:#303942;white-space:pre;transform:scaleX(1.080);">4/9/2023, 11:53:41.012 AM</span></span>
<span style="position:absolute;left:68.80px;transform-origin:0 50%;top:308.11px;font:400 6.75px/8.78px 'Liberation Sans',sans-serif;color:#5f6368;white-space:pre;transform:scaleX(1.008);">Role</span>
<span style="position:absolute;left:229.60px;top:308.11px;width:0;height:0"><span style="position:absolute;right:0;top:0;transform-origin:100% 50%;font:400 6.75px/8.78px 'Liberation Sans',sans-serif;color:#303942;white-space:pre;transform:scaleX(1.099);">gridcell</span></span>
<span style="position:absolute;left:68.80px;transform-origin:0 50%;top:318.91px;font:400 6.75px/8.78px 'Liberation Sans',sans-serif;color:#5f6368;white-space:pre;transform:scaleX(1.088);">Keyboard-focusable</span>
<svg style="position:absolute;left:220.700px;top:318.0px" width="8.800" height="8.800" viewBox="0 0 8.800 8.800"><circle cx="4.400" cy="4.400" r="3.600" stroke="#2ea640" stroke-width="1.050" fill="none"/><path d="M2.700 4.500l1.200 1.200 2.300-2.500" stroke="#2ea640" stroke-width="1.050" fill="none"/></svg>
<div style="position:absolute;left:1.00px;top:508.60px;width:346.30px;height:8.00px;background:#f1f1f1;"></div>
<div style="position:absolute;left:10.50px;top:509.80px;width:304.70px;height:5.60px;background:#c1c1c1;"></div>
<svg style="position:absolute;left:3.500px;top:510.600px" width="3" height="4" viewBox="0 0 3 4"><path d="M2.800 .2v3.600L.3 2z" fill="#a3a3a3"/></svg>
<svg style="position:absolute;left:340.800px;top:510.600px" width="3" height="4" viewBox="0 0 3 4"><path d="M.2 .2v3.600L2.700 2z" fill="#505050"/></svg>
</div>
<div style="position:absolute;left:347.30px;top:45.00px;width:676.70px;height:473.00px;background:#202124;"></div>
<div style="position:absolute;left:347.30px;top:284.10px;width:432.10px;height:46.70px;background:#454545;"></div>
<span style="position:absolute;left:352.50px;transform-origin:0 50%;top:285.62px;font:400 5.5px/7.15px 'Liberation Sans',sans-serif;color:#bdc1c6;white-space:pre;transform:scaleX(1.100);">...</span>
<div style="position:absolute;left:347.300px;top:60px;width:432.100px;height:443.500px;overflow:hidden"><div style="position:absolute;left:-347.300px;top:-60px">
<svg style="position:absolute;left:446.50px;top:58.15px" width="4" height="5" viewBox="0 0 4 5"><path d="M.5 .3L3.500 2.500 .5 4.700z" fill="#b0b4b9"/></svg>
<div style="position:absolute;left:451.80px;top:57.95px;height:9.492px;font:6.27px/9.492px &quot;Liberation Mono&quot;,monospace;white-space:pre"><span style="color:#5db0d7">&lt;tr </span><span style="color:#9bbbdc">data-row</span><span style="color:#5db0d7">="</span><span style="color:#f29766">6</span><span style="color:#5db0d7">" </span><span style="color:#9bbbdc">class</span><span style="color:#5db0d7">="</span><span style="color:#f29766">TcHmi_Controls_Beckhoff_TcHmiDatagrid-template-row tchmi-datag</span></div>
<div style="position:absolute;left:451.80px;top:67.44px;height:9.492px;font:6.27px/9.492px &quot;Liberation Mono&quot;,monospace;white-space:pre"><span style="color:#f29766">rid-template-row message info</span><span style="color:#5db0d7">"&gt;</span><span style="display:inline-block;width:10.72px;height:9.492px;position:relative;vertical-align:top"><span style="position:absolute;left:.5px;top:1.500px;width:7.800px;height:5.400px;background:#393b3f;border-radius:2.700px;color:#e8eaed;font:700 5.500px/2.600px &quot;Liberation Sans&quot;,sans-serif;text-align:center;letter-spacing:.1px">…</span></span><span style="color:#5db0d7">&lt;/tr&gt;</span></div>
<svg style="position:absolute;left:446.50px;top:77.13px" width="4" height="5" viewBox="0 0 4 5"><path d="M.5 .3L3.500 2.500 .5 4.700z" fill="#b0b4b9"/></svg>
<div style="position:absolute;left:451.80px;top:76.93px;height:9.492px;font:6.27px/9.492px &quot;Liberation Mono&quot;,monospace;white-space:pre"><span style="color:#5db0d7">&lt;tr </span><span style="color:#9bbbdc">data-row</span><span style="color:#5db0d7">="</span><span style="color:#f29766">7</span><span style="color:#5db0d7">" </span><span style="color:#9bbbdc">class</span><span style="color:#5db0d7">="</span><span style="color:#f29766">TcHmi_Controls_Beckhoff_TcHmiDatagrid-template-row tchmi-datag</span></div>
<div style="position:absolute;left:451.80px;top:86.42px;height:9.492px;font:6.27px/9.492px &quot;Liberation Mono&quot;,monospace;white-space:pre"><span style="color:#f29766">rid-template-row message verbose</span><span style="color:#5db0d7">"&gt;</span><span style="display:inline-block;width:10.72px;height:9.492px;position:relative;vertical-align:top"><span style="position:absolute;left:.5px;top:1.500px;width:7.800px;height:5.400px;background:#393b3f;border-radius:2.700px;color:#e8eaed;font:700 5.500px/2.600px &quot;Liberation Sans&quot;,sans-serif;text-align:center;letter-spacing:.1px">…</span></span><span style="color:#5db0d7">&lt;/tr&gt;</span></div>
<svg style="position:absolute;left:446.50px;top:96.12px" width="4" height="5" viewBox="0 0 4 5"><path d="M.5 .3L3.500 2.500 .5 4.700z" fill="#b0b4b9"/></svg>
<div style="position:absolute;left:451.80px;top:95.92px;height:9.492px;font:6.27px/9.492px &quot;Liberation Mono&quot;,monospace;white-space:pre"><span style="color:#5db0d7">&lt;tr </span><span style="color:#9bbbdc">data-row</span><span style="color:#5db0d7">="</span><span style="color:#f29766">8</span><span style="color:#5db0d7">" </span><span style="color:#9bbbdc">class</span><span style="color:#5db0d7">="</span><span style="color:#f29766">TcHmi_Controls_Beckhoff_TcHmiDatagrid-template-row tchmi-datag</span></div>
<div style="position:absolute;left:451.80px;top:105.41px;height:9.492px;font:6.27px/9.492px &quot;Liberation Mono&quot;,monospace;white-space:pre"><span style="color:#f29766">rid-template-row message info</span><span style="color:#5db0d7">"&gt;</span><span style="display:inline-block;width:10.72px;height:9.492px;position:relative;vertical-align:top"><span style="position:absolute;left:.5px;top:1.500px;width:7.800px;height:5.400px;background:#393b3f;border-radius:2.700px;color:#e8eaed;font:700 5.500px/2.600px &quot;Liberation Sans&quot;,sans-serif;text-align:center;letter-spacing:.1px">…</span></span><span style="color:#5db0d7">&lt;/tr&gt;</span></div>
<svg style="position:absolute;left:446.50px;top:115.10px" width="4" height="5" viewBox="0 0 4 5"><path d="M.5 .3L3.500 2.500 .5 4.700z" fill="#b0b4b9"/></svg>
<div style="position:absolute;left:451.80px;top:114.90px;height:9.492px;font:6.27px/9.492px &quot;Liberation Mono&quot;,monospace;white-space:pre"><span style="color:#5db0d7">&lt;tr </span><span style="color:#9bbbdc">data-row</span><span style="color:#5db0d7">="</span><span style="color:#f29766">9</span><span style="color:#5db0d7">" </span><span style="color:#9bbbdc">class</span><span style="color:#5db0d7">="</span><span style="color:#f29766">TcHmi_Controls_Beckhoff_TcHmiDatagrid-template-row tchmi-datag</span></div>
<div style="position:absolute;left:451.80px;top:124.39px;height:9.492px;font:6.27px/9.492px &quot;Liberation Mono&quot;,monospace;white-space:pre"><span style="color:#f29766">rid-template-row message info</span><span style="color:#5db0d7">"&gt;</span><span style="display:inline-block;width:10.72px;height:9.492px;position:relative;vertical-align:top"><span style="position:absolute;left:.5px;top:1.500px;width:7.800px;height:5.400px;background:#393b3f;border-radius:2.700px;color:#e8eaed;font:700 5.500px/2.600px &quot;Liberation Sans&quot;,sans-serif;text-align:center;letter-spacing:.1px">…</span></span><span style="color:#5db0d7">&lt;/tr&gt;</span></div>
<svg style="position:absolute;left:446.00px;top:134.68px" width="5" height="4" viewBox="0 0 5 4"><path d="M.3 .5h4.400L2.500 3.500z" fill="#b0b4b9"/></svg>
<div style="position:absolute;left:451.80px;top:133.88px;height:9.492px;font:6.27px/9.492px &quot;Liberation Mono&quot;,monospace;white-space:pre"><span style="color:#5db0d7">&lt;tr </span><span style="color:#9bbbdc">data-row</span><span style="color:#5db0d7">="</span><span style="color:#f29766">10</span><span style="color:#5db0d7">" </span><span style="color:#9bbbdc">class</span><span style="color:#5db0d7">="</span><span style="color:#f29766">TcHmi_Controls_Beckhoff_TcHmiDatagrid-template-row tchmi-data</span></div>
<div style="position:absolute;left:451.80px;top:143.38px;height:9.492px;font:6.27px/9.492px &quot;Liberation Mono&quot;,monospace;white-space:pre"><span style="color:#f29766">grid-template-row message warning</span><span style="color:#5db0d7">"&gt;</span></div>
<div style="position:absolute;left:458.80px;top:152.87px;height:9.492px;font:6.27px/9.492px &quot;Liberation Mono&quot;,monospace;white-space:pre"><span style="color:#5db0d7">&lt;td </span><span style="color:#9bbbdc">data-row</span><span style="color:#5db0d7">="</span><span style="color:#f29766">10</span><span style="color:#5db0d7">" </span><span style="color:#9bbbdc">class</span><span style="color:#5db0d7">="</span><span style="color:#f29766">TcHmi_Controls_Beckhoff_TcHmiDatagrid-template-row-numbers t</span></div>
<div style="position:absolute;left:458.80px;top:162.36px;height:9.492px;font:6.27px/9.492px &quot;Liberation Mono&quot;,monospace;white-space:pre"><span style="color:#f29766">chmi-datagrid-template-row-numbers tchmi-box</span><span style="color:#5db0d7">" </span><span style="color:#9bbbdc">style</span><span style="color:#5db0d7">="</span><span style="color:#f29766">min-width: 30px; max-width: 30p</span></div>
<div style="position:absolute;left:458.80px;top:171.85px;height:9.492px;font:6.27px/9.492px &quot;Liberation Mono&quot;,monospace;white-space:pre"><span style="color:#f29766">x; height: 30px; justify-content: center; align-items: center; border-width: 0px 1px </span></div>
<div style="position:absolute;left:458.80px;top:181.34px;height:9.492px;font:6.27px/9.492px &quot;Liberation Mono&quot;,monospace;white-space:pre"><span style="color:#f29766">1px 0px;</span><span style="color:#5db0d7">"&gt;</span><span style="color:#e8eaed">11</span><span style="color:#5db0d7">&lt;/td&gt;</span><span style="display:inline-block;width:21px;height:9.492px;position:relative;vertical-align:top"><span style="position:absolute;left:1.100px;top:-.8px;width:19px;height:8.400px;box-sizing:border-box;border:.7px solid #2f6a86;border-radius:4.200px;background:#1f2a32;color:#e8eaed;font:5.400px/8.600px &quot;Liberation Mono&quot;,monospace;text-align:center">flex</span></span></div>
<svg style="position:absolute;left:453.50px;top:191.04px" width="4" height="5" viewBox="0 0 4 5"><path d="M.5 .3L3.500 2.500 .5 4.700z" fill="#b0b4b9"/></svg>
<div style="position:absolute;left:458.80px;top:190.84px;height:9.492px;font:6.27px/9.492px &quot;Liberation Mono&quot;,monospace;white-space:pre"><span style="color:#5db0d7">&lt;td </span><span style="color:#9bbbdc">data-row</span><span style="color:#5db0d7">="</span><span style="color:#f29766">10</span><span style="color:#5db0d7">" </span><span style="color:#9bbbdc">class</span><span style="color:#5db0d7">="</span><span style="color:#f29766">TcHmi_Controls_Beckhoff_TcHmiDatagrid-template-cell tchmi-da</span></div>
<div style="position:absolute;left:458.80px;top:200.33px;height:9.492px;font:6.27px/9.492px &quot;Liberation Mono&quot;,monospace;white-space:pre"><span style="color:#f29766">tagrid-template-cell tchmi-box</span><span style="color:#5db0d7">" </span><span style="color:#9bbbdc">data-column</span><span style="color:#5db0d7">="</span><span style="color:#f29766">0</span><span style="color:#5db0d7">" </span><span style="color:#9bbbdc">data-column-name</span><span style="color:#5db0d7">="</span><span style="color:#f29766">type</span><span style="color:#5db0d7">" </span><span style="color:#9bbbdc">tabindex</span><span style="color:#5db0d7">="</span><span style="color:#f29766">0</span><span style="color:#5db0d7">" </span></div>
<div style="position:absolute;left:458.80px;top:209.82px;height:9.492px;font:6.27px/9.492px &quot;Liberation Mono&quot;,monospace;white-space:pre"><span style="color:#9bbbdc">style</span><span style="color:#5db0d7">="</span><span style="color:#f29766">min-width: 30px; max-width: 30px; height: 30px; justify-content: center; align</span></div>
<div style="position:absolute;left:458.80px;top:219.31px;height:9.492px;font:6.27px/9.492px &quot;Liberation Mono&quot;,monospace;white-space:pre"><span style="color:#f29766">-items: center; border-width: 0px 1px 1px 0px; padding-right: 3px; padding-left: 3px;</span></div>
<div style="position:absolute;left:458.80px;top:228.80px;height:9.492px;font:6.27px/9.492px &quot;Liberation Mono&quot;,monospace;white-space:pre"><span style="color:#5db0d7">"&gt;</span><span style="display:inline-block;width:10.72px;height:9.492px;position:relative;vertical-align:top"><span style="position:absolute;left:.5px;top:1.500px;width:7.800px;height:5.400px;background:#393b3f;border-radius:2.700px;color:#e8eaed;font:700 5.500px/2.600px &quot;Liberation Sans&quot;,sans-serif;text-align:center;letter-spacing:.1px">…</span></span><span style="color:#5db0d7">&lt;/td&gt;</span><span style="display:inline-block;width:21px;height:9.492px;position:relative;vertical-align:top"><span style="position:absolute;left:1.100px;top:-.8px;width:19px;height:8.400px;box-sizing:border-box;border:.7px solid #2f6a86;border-radius:4.200px;background:#1f2a32;color:#e8eaed;font:5.400px/8.600px &quot;Liberation Mono&quot;,monospace;text-align:center">flex</span></span></div>
<svg style="position:absolute;left:453.50px;top:238.50px" width="4" height="5" viewBox="0 0 4 5"><path d="M.5 .3L3.500 2.500 .5 4.700z" fill="#b0b4b9"/></svg>
<div style="position:absolute;left:458.80px;top:238.30px;height:9.492px;font:6.27px/9.492px &quot;Liberation Mono&quot;,monospace;white-space:pre"><span style="color:#5db0d7">&lt;td </span><span style="color:#9bbbdc">data-row</span><span style="color:#5db0d7">="</span><span style="color:#f29766">10</span><span style="color:#5db0d7">" </span><span style="color:#9bbbdc">class</span><span style="color:#5db0d7">="</span><span style="color:#f29766">TcHmi_Controls_Beckhoff_TcHmiDatagrid-template-cell tchmi-da</span></div>
<div style="position:absolute;left:458.80px;top:247.79px;height:9.492px;font:6.27px/9.492px &quot;Liberation Mono&quot;,monospace;white-space:pre"><span style="color:#f29766">tagrid-template-cell tchmi-box</span><span style="color:#5db0d7">" </span><span style="color:#9bbbdc">data-column</span><span style="color:#5db0d7">="</span><span style="color:#f29766">1</span><span style="color:#5db0d7">" </span><span style="color:#9bbbdc">data-column-name</span><span style="color:#5db0d7">="</span><span style="color:#f29766">severity</span><span style="color:#5db0d7">" </span><span style="color:#9bbbdc">tabindex</span><span style="color:#5db0d7">=</span></div>
<div style="position:absolute;left:458.80px;top:257.28px;height:9.492px;font:6.27px/9.492px &quot;Liberation Mono&quot;,monospace;white-space:pre"><span style="color:#5db0d7">"</span><span style="color:#f29766">0</span><span style="color:#5db0d7">" </span><span style="color:#9bbbdc">style</span><span style="color:#5db0d7">="</span><span style="color:#f29766">min-width: 30px; max-width: 30px; height: 30px; justify-content: center; a</span></div>
<div style="position:absolute;left:458.80px;top:266.77px;height:9.492px;font:6.27px/9.492px &quot;Liberation Mono&quot;,monospace;white-space:pre"><span style="color:#f29766">lign-items: center; border-width: 0px 1px 1px 0px; padding-right: 3px; padding-left: </span></div>
<div style="position:absolute;left:458.80px;top:276.26px;height:9.492px;font:6.27px/9.492px &quot;Liberation Mono&quot;,monospace;white-space:pre"><span style="color:#f29766">3px;</span><span style="color:#5db0d7">"&gt;</span><span style="display:inline-block;width:10.72px;height:9.492px;position:relative;vertical-align:top"><span style="position:absolute;left:.5px;top:1.500px;width:7.800px;height:5.400px;background:#393b3f;border-radius:2.700px;color:#e8eaed;font:700 5.500px/2.600px &quot;Liberation Sans&quot;,sans-serif;text-align:center;letter-spacing:.1px">…</span></span><span style="color:#5db0d7">&lt;/td&gt;</span><span style="display:inline-block;width:21px;height:9.492px;position:relative;vertical-align:top"><span style="position:absolute;left:1.100px;top:-.8px;width:19px;height:8.400px;box-sizing:border-box;border:.7px solid #2f6a86;border-radius:4.200px;background:#1f2a32;color:#e8eaed;font:5.400px/8.600px &quot;Liberation Mono&quot;,monospace;text-align:center">flex</span></span></div>
<div style="position:absolute;left:458.80px;top:285.76px;height:9.492px;font:6.27px/9.492px &quot;Liberation Mono&quot;,monospace;white-space:pre"><span style="color:#5db0d7">&lt;td </span><span style="color:#9bbbdc">data-row</span><span style="color:#5db0d7">="</span><span style="color:#f29766">10</span><span style="color:#5db0d7">" </span><span style="color:#9bbbdc">class</span><span style="color:#5db0d7">="</span><span style="color:#f29766">TcHmi_Controls_Beckhoff_TcHmiDatagrid-template-cell tchmi-da</span></div>
<div style="position:absolute;left:458.80px;top:295.25px;height:9.492px;font:6.27px/9.492px &quot;Liberation Mono&quot;,monospace;white-space:pre"><span style="color:#f29766">tagrid-template-cell tchmi-box</span><span style="color:#5db0d7">" </span><span style="color:#9bbbdc">data-column</span><span style="color:#5db0d7">="</span><span style="color:#f29766">2</span><span style="color:#5db0d7">" </span><span style="color:#9bbbdc">data-column-name</span><span style="color:#5db0d7">="</span><span style="color:#f29766">timeRaised</span><span style="color:#5db0d7">" </span></div>
<div style="position:absolute;left:458.80px;top:304.74px;height:9.492px;font:6.27px/9.492px &quot;Liberation Mono&quot;,monospace;white-space:pre"><span style="color:#9bbbdc">tabindex</span><span style="color:#5db0d7">="</span><span style="color:#f29766">0</span><span style="color:#5db0d7">" </span><span style="color:#9bbbdc">style</span><span style="color:#5db0d7">="</span><span style="color:#f29766">min-width: 150px; max-width: 150px; height: 30px; justify-conten</span></div>
<div style="position:absolute;left:458.80px;top:314.23px;height:9.492px;font:6.27px/9.492px &quot;Liberation Mono&quot;,monospace;white-space:pre"><span style="color:#f29766">t: center; align-items: center; border-width: 0px 1px 1px 0px; padding-right: 3px; pa</span></div>
<div style="position:absolute;left:458.80px;top:323.72px;height:9.492px;font:6.27px/9.492px &quot;Liberation Mono&quot;,monospace;white-space:pre"><span style="color:#f29766">dding-left: 3px;</span><span style="color:#5db0d7">"&gt;</span><span style="color:#e8eaed">4/9/2023, 11:53:41.012 AM</span><span style="color:#5db0d7">&lt;/td&gt;</span><span style="display:inline-block;width:21px;height:9.492px;position:relative;vertical-align:top"><span style="position:absolute;left:1.100px;top:-.8px;width:19px;height:8.400px;box-sizing:border-box;border:.7px solid #2f6a86;border-radius:4.200px;background:#1f2a32;color:#e8eaed;font:5.400px/8.600px &quot;Liberation Mono&quot;,monospace;text-align:center">flex</span></span><span style="color:#9aa0a6;font-style:italic;margin-left:4.600px">== $0</span></div>
<div style="position:absolute;left:458.80px;top:333.22px;height:9.492px;font:6.27px/9.492px &quot;Liberation Mono&quot;,monospace;white-space:pre"><span style="color:#5db0d7">&lt;td </span><span style="color:#9bbbdc">data-row</span><span style="color:#5db0d7">="</span><span style="color:#f29766">10</span><span style="color:#5db0d7">" </span><span style="color:#9bbbdc">class</span><span style="color:#5db0d7">="</span><span style="color:#f29766">TcHmi_Controls_Beckhoff_TcHmiDatagrid-template-cell tchmi-da</span></div>
<div style="position:absolute;left:458.80px;top:342.71px;height:9.492px;font:6.27px/9.492px &quot;Liberation Mono&quot;,monospace;white-space:pre"><span style="color:#f29766">tagrid-template-cell tchmi-box</span><span style="color:#5db0d7">" </span><span style="color:#9bbbdc">data-column</span><span style="color:#5db0d7">="</span><span style="color:#f29766">3</span><span style="color:#5db0d7">" </span><span style="color:#9bbbdc">data-column-name</span><span style="color:#5db0d7">="</span><span style="color:#f29766">text</span><span style="color:#5db0d7">" </span><span style="color:#9bbbdc">tabindex</span><span style="color:#5db0d7">="</span><span style="color:#f29766">0</span><span style="color:#5db0d7">" </span></div>
<div style="position:absolute;left:458.80px;top:352.20px;height:9.492px;font:6.27px/9.492px &quot;Liberation Mono&quot;,monospace;white-space:pre"><span style="color:#9bbbdc">style</span><span style="color:#5db0d7">="</span><span style="color:#f29766">min-width: 373px; max-width: 373px; height: 30px; justify-content: flex-start; </span></div>
<div style="position:absolute;left:458.80px;top:361.69px;height:9.492px;font:6.27px/9.492px &quot;Liberation Mono&quot;,monospace;white-space:pre"><span style="color:#f29766">align-items: center; border-width: 0px 1px 1px 0px; padding-right: 3px; padding-left: </span></div>
<div style="position:absolute;left:458.80px;top:371.18px;height:9.492px;font:6.27px/9.492px &quot;Liberation Mono&quot;,monospace;white-space:pre"><span style="color:#f29766">3px;</span><span style="color:#5db0d7">"&gt;</span><span style="color:#e8eaed">Unable to connect to the local TwinCAT System: ERR_PORTDISABLED (0x00000012)</span></div>
<div style="position:absolute;left:458.80px;top:380.68px;height:9.492px;font:6.27px/9.492px &quot;Liberation Mono&quot;,monospace;white-space:pre"><span style="color:#5db0d7">&lt;/td&gt;</span><span style="display:inline-block;width:21px;height:9.492px;position:relative;vertical-align:top"><span style="position:absolute;left:1.100px;top:-.8px;width:19px;height:8.400px;box-sizing:border-box;border:.7px solid #2f6a86;border-radius:4.200px;background:#1f2a32;color:#e8eaed;font:5.400px/8.600px &quot;Liberation Mono&quot;,monospace;text-align:center">flex</span></span></div>
<div style="position:absolute;left:451.80px;top:390.17px;height:9.492px;font:6.27px/9.492px &quot;Liberation Mono&quot;,monospace;white-space:pre"><span style="color:#5db0d7">&lt;/tr&gt;</span></div>
<svg style="position:absolute;left:446.50px;top:399.86px" width="4" height="5" viewBox="0 0 4 5"><path d="M.5 .3L3.500 2.500 .5 4.700z" fill="#b0b4b9"/></svg>
<div style="position:absolute;left:451.80px;top:399.66px;height:9.492px;font:6.27px/9.492px &quot;Liberation Mono&quot;,monospace;white-space:pre"><span style="color:#5db0d7">&lt;tr </span><span style="color:#9bbbdc">data-row</span><span style="color:#5db0d7">="</span><span style="color:#f29766">11</span><span style="color:#5db0d7">" </span><span style="color:#9bbbdc">class</span><span style="color:#5db0d7">="</span><span style="color:#f29766">TcHmi_Controls_Beckhoff_TcHmiDatagrid-template-row tchmi-data</span></div>
<div style="position:absolute;left:451.80px;top:409.15px;height:9.492px;font:6.27px/9.492px &quot;Liberation Mono&quot;,monospace;white-space:pre"><span style="color:#f29766">grid-template-row message info</span><span style="color:#5db0d7">"&gt;</span><span style="display:inline-block;width:10.72px;height:9.492px;position:relative;vertical-align:top"><span style="position:absolute;left:.5px;top:1.500px;width:7.800px;height:5.400px;background:#393b3f;border-radius:2.700px;color:#e8eaed;font:700 5.500px/2.600px &quot;Liberation Sans&quot;,sans-serif;text-align:center;letter-spacing:.1px">…</span></span><span style="color:#5db0d7">&lt;/tr&gt;</span></div>
<svg style="position:absolute;left:446.50px;top:418.84px" width="4" height="5" viewBox="0 0 4 5"><path d="M.5 .3L3.500 2.500 .5 4.700z" fill="#b0b4b9"/></svg>
<div style="position:absolute;left:451.80px;top:418.64px;height:9.492px;font:6.27px/9.492px &quot;Liberation Mono&quot;,monospace;white-space:pre"><span style="color:#5db0d7">&lt;tr </span><span style="color:#9bbbdc">data-row</span><span style="color:#5db0d7">="</span><span style="color:#f29766">12</span><span style="color:#5db0d7">" </span><span style="color:#9bbbdc">class</span><span style="color:#5db0d7">="</span><span style="color:#f29766">TcHmi_Controls_Beckhoff_TcHmiDatagrid-template-row tchmi-data</span></div>
<div style="position:absolute;left:451.80px;top:428.14px;height:9.492px;font:6.27px/9.492px &quot;Liberation Mono&quot;,monospace;white-space:pre"><span style="color:#f29766">grid-template-row message verbose</span><span style="color:#5db0d7">"&gt;</span><span style="display:inline-block;width:10.72px;height:9.492px;position:relative;vertical-align:top"><span style="position:absolute;left:.5px;top:1.500px;width:7.800px;height:5.400px;background:#393b3f;border-radius:2.700px;color:#e8eaed;font:700 5.500px/2.600px &quot;Liberation Sans&quot;,sans-serif;text-align:center;letter-spacing:.1px">…</span></span><span style="color:#5db0d7">&lt;/tr&gt;</span></div>
<svg style="position:absolute;left:446.50px;top:437.83px" width="4" height="5" viewBox="0 0 4 5"><path d="M.5 .3L3.500 2.500 .5 4.700z" fill="#b0b4b9"/></svg>
<div style="position:absolute;left:451.80px;top:437.63px;height:9.492px;font:6.27px/9.492px &quot;Liberation Mono&quot;,monospace;white-space:pre"><span style="color:#5db0d7">&lt;tr </span><span style="color:#9bbbdc">data-row</span><span style="color:#5db0d7">="</span><span style="color:#f29766">13</span><span style="color:#5db0d7">" </span><span style="color:#9bbbdc">class</span><span style="color:#5db0d7">="</span><span style="color:#f29766">TcHmi_Controls_Beckhoff_TcHmiDatagrid-template-row tchmi-data</span></div>
<div style="position:absolute;left:451.80px;top:447.12px;height:9.492px;font:6.27px/9.492px &quot;Liberation Mono&quot;,monospace;white-space:pre"><span style="color:#f29766">grid-template-row message info</span><span style="color:#5db0d7">"&gt;</span><span style="display:inline-block;width:10.72px;height:9.492px;position:relative;vertical-align:top"><span style="position:absolute;left:.5px;top:1.500px;width:7.800px;height:5.400px;background:#393b3f;border-radius:2.700px;color:#e8eaed;font:700 5.500px/2.600px &quot;Liberation Sans&quot;,sans-serif;text-align:center;letter-spacing:.1px">…</span></span><span style="color:#5db0d7">&lt;/tr&gt;</span></div>
<svg style="position:absolute;left:446.50px;top:456.81px" width="4" height="5" viewBox="0 0 4 5"><path d="M.5 .3L3.500 2.500 .5 4.700z" fill="#b0b4b9"/></svg>
<div style="position:absolute;left:451.80px;top:456.61px;height:9.492px;font:6.27px/9.492px &quot;Liberation Mono&quot;,monospace;white-space:pre"><span style="color:#5db0d7">&lt;tr </span><span style="color:#9bbbdc">data-row</span><span style="color:#5db0d7">="</span><span style="color:#f29766">14</span><span style="color:#5db0d7">" </span><span style="color:#9bbbdc">class</span><span style="color:#5db0d7">="</span><span style="color:#f29766">TcHmi_Controls_Beckhoff_TcHmiDatagrid-template-row tchmi-data</span></div>
<div style="position:absolute;left:451.80px;top:466.10px;height:9.492px;font:6.27px/9.492px &quot;Liberation Mono&quot;,monospace;white-space:pre"><span style="color:#f29766">grid-template-row message info</span><span style="color:#5db0d7">"&gt;</span><span style="display:inline-block;width:10.72px;height:9.492px;position:relative;vertical-align:top"><span style="position:absolute;left:.5px;top:1.500px;width:7.800px;height:5.400px;background:#393b3f;border-radius:2.700px;color:#e8eaed;font:700 5.500px/2.600px &quot;Liberation Sans&quot;,sans-serif;text-align:center;letter-spacing:.1px">…</span></span><span style="color:#5db0d7">&lt;/tr&gt;</span></div>
<svg style="position:absolute;left:446.50px;top:475.80px" width="4" height="5" viewBox="0 0 4 5"><path d="M.5 .3L3.500 2.500 .5 4.700z" fill="#b0b4b9"/></svg>
<div style="position:absolute;left:451.80px;top:475.60px;height:9.492px;font:6.27px/9.492px &quot;Liberation Mono&quot;,monospace;white-space:pre"><span style="color:#5db0d7">&lt;tr </span><span style="color:#9bbbdc">data-row</span><span style="color:#5db0d7">="</span><span style="color:#f29766">15</span><span style="color:#5db0d7">" </span><span style="color:#9bbbdc">class</span><span style="color:#5db0d7">="</span><span style="color:#f29766">TcHmi_Controls_Beckhoff_TcHmiDatagrid-template-row tchmi-data</span></div>
<div style="position:absolute;left:451.80px;top:485.09px;height:9.492px;font:6.27px/9.492px &quot;Liberation Mono&quot;,monospace;white-space:pre"><span style="color:#f29766">grid-template-row message warning</span><span style="color:#5db0d7">"&gt;</span><span style="display:inline-block;width:10.72px;height:9.492px;position:relative;vertical-align:top"><span style="position:absolute;left:.5px;top:1.500px;width:7.800px;height:5.400px;background:#393b3f;border-radius:2.700px;color:#e8eaed;font:700 5.500px/2.600px &quot;Liberation Sans&quot;,sans-serif;text-align:center;letter-spacing:.1px">…</span></span><span style="color:#5db0d7">&lt;/tr&gt;</span></div>
<svg style="position:absolute;left:446.50px;top:494.78px" width="4" height="5" viewBox="0 0 4 5"><path d="M.5 .3L3.500 2.500 .5 4.700z" fill="#b0b4b9"/></svg>
<div style="position:absolute;left:451.80px;top:494.58px;height:9.492px;font:6.27px/9.492px &quot;Liberation Mono&quot;,monospace;white-space:pre"><span style="color:#5db0d7">&lt;tr </span><span style="color:#9bbbdc">data-row</span><span style="color:#5db0d7">="</span><span style="color:#f29766">16</span><span style="color:#5db0d7">" </span><span style="color:#9bbbdc">class</span><span style="color:#5db0d7">="</span><span style="color:#f29766">TcHmi_Controls_Beckhoff_TcHmiDatagrid-template-row tchmi-data</span></div>
</div></div>
<div style="position:absolute;left:779.10px;top:60.30px;width:9.70px;height:442.90px;background:#414141;"></div>
<div style="position:absolute;left:780.00px;top:271.80px;width:8.00px;height:125.80px;background:#686868;"></div>
<svg style="position:absolute;left:781.700px;top:64.500px" width="5" height="3" viewBox="0 0 5 3"><path d="M2.500 0L5 3H0z" fill="#e8eaed"/></svg>
<svg style="position:absolute;left:781.700px;top:496.500px" width="5" height="3" viewBox="0 0 5 3"><path d="M2.500 3L5 0H0z" fill="#e8eaed"/></svg>
<div style="position:absolute;left:347.30px;top:504.00px;width:441.50px;height:14.00px;background:#292a2d;"></div>
<div style="position:absolute;left:347.30px;top:503.70px;width:441.50px;height:0.50px;background:#3c4043;"></div>
<span style="position:absolute;left:352.30px;transform-origin:0 50%;top:507.32px;font:400 7.5px/9.75px 'Liberation Sans',sans-serif;color:#e8eaed;white-space:pre;transform:scaleX(1.088);">...</span>
<span style="position:absolute;left:364.00px;transform-origin:0 50%;top:508.11px;font:400 6.75px/8.78px 'Liberation Sans',sans-serif;color:#bdc1c6;white-space:pre;transform:scaleX(1.021);">d-template-row.message.warning</span>
<span style="position:absolute;left:473.00px;transform-origin:0 50%;top:508.11px;font:400 6.75px/8.78px 'Liberation Sans',sans-serif;color:#c4d6f5;white-space:pre;transform:scaleX(1.019);"><span style="color:#d7aefb">td</span>.TcHmi_Controls_Beckhoff_TcHmiDatagrid-template-cell.tchmi-datagrid-template-cell.tchmi-box</span>
<span style="position:absolute;left:777.50px;transform-origin:0 50%;top:507.32px;font:400 7.5px/9.75px 'Liberation Sans',sans-serif;color:#9aa0a6;white-space:pre;transform:scaleX(1.088);">...</span>
<div style="position:absolute;left:347.30px;top:45.00px;width:676.70px;height:15.00px;background:#292a2d;"></div>
<div style="position:absolute;left:347.30px;top:59.70px;width:676.70px;height:0.60px;background:#3c4043;"></div>
<div style="position:absolute;left:347.30px;top:45.00px;width:676.70px;height:0.60px;background:#3c4043;"></div>
<div style="position:absolute;left:347.60px;top:46.00px;width:16.00px;height:13.70px;background:#25272a;"></div>
<svg style="position:absolute;left:351.900px;top:48.600px" width="9.500" height="9.500" viewBox="0 0 10 10"><path d="M8.200 4V1.600H1.600v6.600H4" stroke="#7096d0" stroke-width=".9" fill="none"/><path d="M4.600 4.600l4.400 1.700-1.800.8 1.700 1.700-.7.700-1.700-1.700-.8 1.800z" fill="#a8c7fa"/></svg>
<svg style="position:absolute;left:367.600px;top:48px" width="10" height="10" viewBox="0 0 10 10"><g stroke="#7c8084" stroke-width=".8" fill="none"><path d="M3.100 2.600V.9c0-.3.200-.5.500-.5h5c.3 0 .5.200.5.500v8.200c0 .3-.2.500-.5.500H4.500"/><rect x=".5" y="2.900" width="3.900" height="6.700" rx=".6"/></g></svg>
<div style="position:absolute;left:383.10px;top:48.70px;width:0.60px;height:8.50px;background:#3f4246;"></div>
<div style="position:absolute;left:387.30px;top:46.00px;width:40.30px;height:14.00px;background:#000;"></div>
<span style="position:absolute;left:393.70px;transform-origin:0 50%;top:49.81px;font:400 6.75px/8.78px 'Liberation Sans',sans-serif;color:#fff;white-space:pre;transform:scaleX(0.960);">Elements</span>
<span style="position:absolute;left:434.00px;transform-origin:0 50%;top:49.81px;font:400 6.75px/8.78px 'Liberation Sans',sans-serif;color:#9aa0a6;white-space:pre;transform:scaleX(0.977);">Console</span>
<span style="position:absolute;left:471.80px;transform-origin:0 50%;top:49.81px;font:400 6.75px/8.78px 'Liberation Sans',sans-serif;color:#9aa0a6;white-space:pre;transform:scaleX(0.949);">Sources</span>
<span style="position:absolute;left:509.00px;transform-origin:0 50%;top:49.81px;font:400 6.75px/8.78px 'Liberation Sans',sans-serif;color:#9aa0a6;white-space:pre;transform:scaleX(1.038);">Network</span>
<span style="position:absolute;left:548.50px;transform-origin:0 50%;top:49.81px;font:400 6.75px/8.78px 'Liberation Sans',sans-serif;color:#9aa0a6;white-space:pre;transform:scaleX(0.981);">Performance</span>
<span style="position:absolute;left:599.80px;transform-origin:0 50%;top:49.81px;font:400 6.75px/8.78px 'Liberation Sans',sans-serif;color:#9aa0a6;white-space:pre;transform:scaleX(1.034);">Memory</span>
<span style="position:absolute;left:638.90px;transform-origin:0 50%;top:49.81px;font:400 6.75px/8.78px 'Liberation Sans',sans-serif;color:#9aa0a6;white-space:pre;transform:scaleX(1.033);">Application</span>
<span style="position:absolute;left:686.50px;transform-origin:0 50%;top:49.81px;font:400 6.75px/8.78px 'Liberation Sans',sans-serif;color:#9aa0a6;white-space:pre;transform:scaleX(0.972);">Security</span>
<span style="position:absolute;left:729.20px;transform-origin:0 50%;top:49.81px;font:400 6.75px/8.78px 'Liberation Sans',sans-serif;color:#9aa0a6;white-space:pre;transform:scaleX(1.014);">Lighthouse</span>
<span style="position:absolute;left:776.00px;transform-origin:0 50%;top:49.81px;font:400 6.75px/8.78px 'Liberation Sans',sans-serif;color:#9aa0a6;white-space:pre;transform:scaleX(0.965);">Recorder</span>
<span style="position:absolute;left:829.70px;transform-origin:0 50%;top:49.81px;font:400 6.75px/8.78px 'Liberation Sans',sans-serif;color:#9aa0a6;white-space:pre;transform:scaleX(0.997);">Performance insights</span>
<svg style="position:absolute;left:806.3px;top:49.800px" width="6" height="7" viewBox="0 0 6 7"><path d="M2.200 .5h1.600v2.300l1.900 3.300c.2.300 0 .6-.3.6H.6c-.3 0-.5-.3-.3-.6l1.900-3.300z" fill="#9aa0a6"/><path d="M1.600 .5h2.800" stroke="#9aa0a6" stroke-width=".6"/></svg>
<svg style="position:absolute;left:895.8px;top:49.800px" width="6" height="7" viewBox="0 0 6 7"><path d="M2.200 .5h1.600v2.300l1.900 3.300c.2.300 0 .6-.3.6H.6c-.3 0-.5-.3-.3-.6l1.900-3.300z" fill="#9aa0a6"/><path d="M1.600 .5h2.800" stroke="#9aa0a6" stroke-width=".6"/></svg>
<div style="position:absolute;left:971.00px;top:48.70px;width:0.60px;height:8.50px;background:#3f4246;"></div>
<svg style="position:absolute;left:977.500px;top:48.800px" width="9" height="9" viewBox="0 0 9 9"><circle cx="4.500" cy="4.500" r="2.300" stroke="#c4c7ca" stroke-width="1.500" fill="none"/><g stroke="#c4c7ca" stroke-width="1.300"><path d="M4.500 .3v1.500M4.500 7.200v1.500M.3 4.500h1.500M7.200 4.500h1.500M1.500 1.500l1 1M6.500 6.500l1 1M1.500 7.500l1-1M6.500 2.500l1-1"/></g></svg>
<svg style="position:absolute;left:997.500px;top:49px" width="3" height="9" viewBox="0 0 3 9"><circle cx="1.500" cy="1.200" r=".75" fill="#c4c7ca"/><circle cx="1.500" cy="4.300" r=".75" fill="#c4c7ca"/><circle cx="1.500" cy="7.400" r=".75" fill="#c4c7ca"/></svg>
<svg style="position:absolute;left:1010.800px;top:50px" width="7" height="7" viewBox="0 0 7 7"><path d="M.5 .5l6 6M6.500 .5l-6 6" stroke="#c4c7ca" stroke-width=".9"/></svg>
<div style="position:absolute;left:788.80px;top:60.00px;width:0.60px;height:458.00px;background:#3c4043;"></div>
<div style="position:absolute;left:789.40px;top:60.30px;width:235.00px;height:15.70px;background:#292a2d;"></div>
<div style="position:absolute;left:789.40px;top:75.70px;width:235.00px;height:0.60px;background:#3c4043;"></div>
<div style="position:absolute;left:790.00px;top:60.50px;width:28.00px;height:15.30px;background:#000;"></div>
<span style="position:absolute;left:794.80px;transform-origin:0 50%;top:65.61px;font:400 6.75px/8.78px 'Liberation Sans',sans-serif;color:#fff;white-space:pre;transform:scaleX(0.968);">Styles</span>
<span style="position:absolute;left:823.60px;transform-origin:0 50%;top:65.61px;font:400 6.75px/8.78px 'Liberation Sans',sans-serif;color:#9aa0a6;white-space:pre;transform:scaleX(1.008);">Computed</span>
<span style="position:absolute;left:866.80px;transform-origin:0 50%;top:65.61px;font:400 6.75px/8.78px 'Liberation Sans',sans-serif;color:#9aa0a6;white-space:pre;transform:scaleX(0.987);">Layout</span>
<span style="position:absolute;left:898.00px;transform-origin:0 50%;top:65.61px;font:400 6.75px/8.78px 'Liberation Sans',sans-serif;color:#9aa0a6;white-space:pre;transform:scaleX(0.967);">Event Listeners</span>
<span style="position:absolute;left:953.80px;transform-origin:0 50%;top:63.02px;font:400 9.5px/12.35px 'Liberation Sans',sans-serif;color:#9aa0a6;white-space:pre;transform:scaleX(1.000);">»</span>
<div style="position:absolute;left:789.40px;top:76.30px;width:225.00px;height:14.50px;background:#202124;"></div>
<div style="position:absolute;left:790.50px;top:77.50px;width:130.00px;height:12.00px;background:#28292c;"></div>
<div style="position:absolute;left:789.40px;top:90.50px;width:225.00px;height:0.60px;background:#3c4043;"></div>
<span style="position:absolute;left:793.50px;transform-origin:0 50%;top:80.81px;font:400 6.75px/8.78px 'Liberation Sans',sans-serif;color:#9aa0a6;white-space:pre;transform:scaleX(0.980);">Filter</span>
<span style="position:absolute;left:926.60px;transform-origin:0 50%;top:81.17px;font:400 6.2px/8.06px 'Liberation Mono',monospace;color:#bdc1c6;white-space:pre;transform:scaleX(0.981);">:hov</span>
<span style="position:absolute;left:947.30px;transform-origin:0 50%;top:81.17px;font:400 6.2px/8.06px 'Liberation Mono',monospace;color:#bdc1c6;white-space:pre;transform:scaleX(0.954);">.cls</span>
<svg style="position:absolute;left:969px;top:80.500px" width="9" height="8" viewBox="0 0 9 8"><path d="M3.300 .3v6M.3 3.300h6" stroke="#bdc1c6" stroke-width=".8"/><path d="M8.200 5.800v2h-2z" fill="#bdc1c6"/></svg>
<svg style="position:absolute;left:984.200px;top:79.800px" width="8" height="9" viewBox="0 0 8 9"><rect x=".8" y=".8" width="6.400" height="3.600" rx=".6" stroke="#bdc1c6" stroke-width=".9" fill="none"/><path d="M.8 3h6.400" stroke="#bdc1c6" stroke-width="1.200"/><path d="M4 4.400v1.400h-.8v2.600h1.600V5.800" stroke="#bdc1c6" stroke-width=".8" fill="none"/></svg>
<svg style="position:absolute;left:999.600px;top:80.300px" width="10" height="8" viewBox="0 0 10 8"><rect x=".5" y=".5" width="9" height="7" rx=".8" stroke="#9aa0a6" stroke-width=".8" fill="none"/><path d="M6.800 .5v7" stroke="#9aa0a6" stroke-width=".8"/><path d="M5 2.600L3 4l2 1.400z" fill="#9aa0a6"/></svg>
<div style="position:absolute;left:1014.30px;top:76.50px;width:9.70px;height:441.50px;background:#414141;"></div>
<div style="position:absolute;left:1015.50px;top:85.70px;width:6.50px;height:110.00px;background:#686868;"></div>
<svg style="position:absolute;left:1016.500px;top:80.300px" width="5" height="3" viewBox="0 0 5 3"><path d="M2.500 0L5 3H0z" fill="#9aa0a6"/></svg>
<svg style="position:absolute;left:1016.500px;top:510.200px" width="5" height="3" viewBox="0 0 5 3"><path d="M2.500 3L5 0H0z" fill="#e8eaed"/></svg>
<div style="position:absolute;left:789.4px;top:91px;width:225.100px;height:427px;overflow:hidden"><div style="position:absolute;left:-789.4px;top:-91px">
<div style="position:absolute;left:792.20px;top:93.90px;height:8px;font:6.27px/8px &quot;Liberation Mono&quot;,monospace;white-space:pre;"><span style="color:#9aa0a6">element.style</span><span style="color:#e8eaed"> {</span></div>
<div style="position:absolute;left:802.00px;top:103.70px;height:8px;font:6.27px/8px &quot;Liberation Mono&quot;,monospace;white-space:pre;"><span style="color:#35d4c7">min-width</span><span style="color:#e8eaed">:</span><span style="color:#e8eaed"> </span><span style="color:#e8eaed">150px</span><span style="color:#e8eaed">;</span></div>
<div style="position:absolute;left:802.00px;top:111.60px;height:8px;font:6.27px/8px &quot;Liberation Mono&quot;,monospace;white-space:pre;"><span style="color:#35d4c7">max-width</span><span style="color:#e8eaed">:</span><span style="color:#e8eaed"> </span><span style="color:#e8eaed">150px</span><span style="color:#e8eaed">;</span></div>
<div style="position:absolute;left:802.00px;top:119.50px;height:8px;font:6.27px/8px &quot;Liberation Mono&quot;,monospace;white-space:pre;"><span style="color:#35d4c7">height</span><span style="color:#e8eaed">:</span><span style="color:#e8eaed"> </span><span style="color:#e8eaed">30px</span><span style="color:#e8eaed">;</span></div>
<div style="position:absolute;left:802.00px;top:127.40px;height:8px;font:6.27px/8px &quot;Liberation Mono&quot;,monospace;white-space:pre;"><span style="color:#35d4c7">justify-content</span><span style="color:#e8eaed">:</span><span style="color:#e8eaed"> </span><span style="color:#e8eaed">center</span><span style="color:#e8eaed">;</span></div>
<div style="position:absolute;left:802.00px;top:135.30px;height:8px;font:6.27px/8px &quot;Liberation Mono&quot;,monospace;white-space:pre;"><span style="color:#35d4c7">align-items</span><span style="color:#e8eaed">:</span><span style="color:#e8eaed"> </span><span style="color:#e8eaed">center</span><span style="color:#e8eaed">;</span></div>
<div style="position:absolute;left:802.00px;top:143.20px;height:8px;font:6.27px/8px &quot;Liberation Mono&quot;,monospace;white-space:pre;"><span style="color:#35d4c7">border-width</span><span style="color:#e8eaed">:</span><span style="display:inline-block;position:relative;width:7.300px;height:8px;vertical-align:top"><svg style="position:absolute;left:1.600px;top:.9px" width="3.400" height="4.400" viewBox="0 0 3 4"><path d="M.2 .2L2.800 2 .2 3.800z" fill="#a5a9ae"/></svg></span><span style="color:#e8eaed">0px 1px 1px 0px</span><span style="color:#e8eaed">;</span></div>
<div style="position:absolute;left:802.00px;top:151.10px;height:8px;font:6.27px/8px &quot;Liberation Mono&quot;,monospace;white-space:pre;"><span style="color:#35d4c7">padding-right</span><span style="color:#e8eaed">:</span><span style="color:#e8eaed"> </span><span style="color:#e8eaed">3px</span><span style="color:#e8eaed">;</span></div>
<div style="position:absolute;left:802.00px;top:159.00px;height:8px;font:6.27px/8px &quot;Liberation Mono&quot;,monospace;white-space:pre;"><span style="color:#35d4c7">padding-left</span><span style="color:#e8eaed">:</span><span style="color:#e8eaed"> </span><span style="color:#e8eaed">3px</span><span style="color:#e8eaed">;</span></div>
<div style="position:absolute;left:792.20px;top:167.32px;height:8px;font:6.27px/8px &quot;Liberation Mono&quot;,monospace;white-space:pre;"><span style="color:#e8eaed">}</span></div>
<div style="position:absolute;left:789.40px;top:176.30px;width:225.00px;height:0.60px;background:#3c4043;"></div>
<div style="position:absolute;left:792.20px;top:179.70px;height:8px;font:6.27px/8px &quot;Liberation Mono&quot;,monospace;white-space:pre;"><span style="color:#e8eaed">.TcHmi_Controls_Beckhoff_TcHmiEventGrid-</span></div>
<div style="position:absolute;left:792.20px;top:187.66px;height:8px;font:6.27px/8px &quot;Liberation Mono&quot;,monospace;white-space:pre;"><span style="color:#e8eaed">template td.TcHmi_Controls_Beckhoff_TcHmiDatagrid-</span></div>
<div style="position:absolute;left:792.20px;top:195.62px;height:8px;font:6.27px/8px &quot;Liberation Mono&quot;,monospace;white-space:pre;"><span style="color:#e8eaed">template-cell:not([data-column-name='type']):not([data-</span></div>
<div style="position:absolute;left:792.20px;top:203.58px;height:8px;font:6.27px/8px &quot;Liberation Mono&quot;,monospace;white-space:pre;"><span style="color:#e8eaed">column-name='severity']),</span></div>
<div style="position:absolute;left:792.20px;top:211.54px;height:8px;font:6.27px/8px &quot;Liberation Mono&quot;,monospace;white-space:pre;"><span style="color:#80868b">.TcHmi_Controls_Beckhoff_TcHmiEventGrid-template-popup</span></div>
<div style="position:absolute;left:792.20px;top:219.50px;height:8px;font:6.27px/8px &quot;Liberation Mono&quot;,monospace;white-space:pre;"><span style="color:#80868b">td.TcHmi_Controls_Beckhoff_TcHmiDatagrid-template-</span></div>
<div style="position:absolute;left:792.20px;top:227.46px;height:8px;font:6.27px/8px &quot;Liberation Mono&quot;,monospace;white-space:pre;"><span style="color:#80868b">cell:not([data-column-name='type']):not([data-column-</span></div>
<div style="position:absolute;left:792.20px;top:235.42px;height:8px;font:6.27px/8px &quot;Liberation Mono&quot;,monospace;white-space:pre;"><span style="color:#80868b">name='severity']), </span><span style="color:#e8eaed">.tchmi-event-grid-template td.tchmi-</span></div>
<div style="position:absolute;left:792.20px;top:243.38px;height:8px;font:6.27px/8px &quot;Liberation Mono&quot;,monospace;white-space:pre;"><span style="color:#e8eaed">datagrid-template-cell:not([data-column-</span></div>
<div style="position:absolute;left:792.20px;top:251.34px;height:8px;font:6.27px/8px &quot;Liberation Mono&quot;,monospace;white-space:pre;"><span style="color:#e8eaed">name='type']):not([data-column-name='severity']), </span><span style="color:#80868b">.tchmi-</span></div>
<div style="position:absolute;left:792.20px;top:259.30px;height:8px;font:6.27px/8px &quot;Liberation Mono&quot;,monospace;white-space:pre;"><span style="color:#80868b">event-grid-template-popup td.tchmi-datagrid-template-</span></div>
<div style="position:absolute;left:792.20px;top:267.26px;height:8px;font:6.27px/8px &quot;Liberation Mono&quot;,monospace;white-space:pre;"><span style="color:#80868b">cell:not([data-column-name='type']):not([data-column-</span></div>
<div style="position:absolute;left:792.20px;top:275.22px;height:8px;font:6.27px/8px &quot;Liberation Mono&quot;,monospace;white-space:pre;"><span style="color:#80868b">name='severity'])</span><span style="color:#e8eaed"> {</span></div>
<div style="position:absolute;left:1013px;top:179.70px;width:0;height:0"><div style="position:absolute;right:0;top:0;font:6.27px/8px &quot;Liberation Mono&quot;,monospace;color:#c7cacf;text-decoration:underline;text-decoration-thickness:.5px;white-space:pre">Style.css:310</div></div>
<div style="position:absolute;left:802.00px;top:284.40px;height:8px;font:6.27px/8px &quot;Liberation Mono&quot;,monospace;white-space:pre;"><span style="color:#35d4c7">padding</span><span style="color:#e8eaed">:</span><span style="display:inline-block;position:relative;width:7.300px;height:8px;vertical-align:top"><svg style="position:absolute;left:1.600px;top:.9px" width="3.400" height="4.400" viewBox="0 0 3 4"><path d="M.2 .2L2.800 2 .2 3.800z" fill="#a5a9ae"/></svg></span><span style="color:#e8eaed">0 5px</span><span style="color:#e8eaed">;</span></div>
<div style="position:absolute;left:792.20px;top:292.50px;height:8px;font:6.27px/8px &quot;Liberation Mono&quot;,monospace;white-space:pre;"><span style="color:#e8eaed">}</span></div>
<div style="position:absolute;left:789.40px;top:300.80px;width:225.00px;height:0.60px;background:#3c4043;"></div>
<div style="position:absolute;left:792.20px;top:304.70px;height:8px;font:6.27px/8px &quot;Liberation Mono&quot;,monospace;white-space:pre;"><span style="color:#e8eaed">.TcHmi_Controls_Beckhoff_TcHmiDatagrid-</span></div>
<div style="position:absolute;left:1013px;top:304.70px;width:0;height:0"><div style="position:absolute;right:0;top:0;font:6.27px/8px &quot;Liberation Mono&quot;,monospace;color:#c7cacf;text-decoration:underline;text-decoration-thickness:.5px;white-space:pre">Style.css:110</div></div>
<div style="position:absolute;left:792.20px;top:312.60px;height:8px;font:6.27px/8px &quot;Liberation Mono&quot;,monospace;white-space:pre;"><span style="color:#e8eaed">template-cell, .tchmi-datagrid-template-cell {</span></div>
<div style="position:absolute;left:802.00px;top:321.60px;height:8px;font:6.27px/8px &quot;Liberation Mono&quot;,monospace;white-space:pre;"><span style="color:#35d4c7">background</span><span style="color:#e8eaed">:</span><span style="display:inline-block;position:relative;width:7.300px;height:8px;vertical-align:top"><svg style="position:absolute;left:1.600px;top:.9px" width="3.400" height="4.400" viewBox="0 0 3 4"><path d="M.2 .2L2.800 2 .2 3.800z" fill="#a5a9ae"/></svg></span><span style="display:inline-block;position:relative;width:7.800px;height:8px;vertical-align:top"><span style="position:absolute;left:1.200px;top:-.100px;width:5px;height:5px;box-sizing:border-box;background:#fff;border:.5px solid #9aa0a6"></span></span><span style="color:#e8eaed">var(</span><span style="color:#5b95e8">--tchmi-background-cell</span><span style="color:#e8eaed">)</span><span style="color:#e8eaed">;</span></div>
<div style="position:absolute;left:802.00px;top:329.70px;height:8px;font:6.27px/8px &quot;Liberation Mono&quot;,monospace;white-space:pre;"><span style="color:#35d4c7">color</span><span style="color:#e8eaed">:</span><span style="color:#e8eaed"> </span><span style="display:inline-block;position:relative;width:7.800px;height:8px;vertical-align:top"><span style="position:absolute;left:1.200px;top:-.100px;width:5px;height:5px;box-sizing:border-box;background:#4c6374;border:.5px solid #9aa0a6"></span></span><span style="color:#e8eaed">var(</span><span style="color:#5b95e8">--tchmi-color-cell</span><span style="color:#e8eaed">)</span><span style="color:#e8eaed">;</span></div>
<div style="position:absolute;left:802.00px;top:337.80px;height:8px;font:6.27px/8px &quot;Liberation Mono&quot;,monospace;white-space:pre;"><span style="color:#35d4c7">border-color</span><span style="color:#e8eaed">:</span><span style="display:inline-block;position:relative;width:7.300px;height:8px;vertical-align:top"><svg style="position:absolute;left:1.600px;top:.9px" width="3.400" height="4.400" viewBox="0 0 3 4"><path d="M.2 .2L2.800 2 .2 3.800z" fill="#a5a9ae"/></svg></span><span style="display:inline-block;position:relative;width:7.800px;height:8px;vertical-align:top"><span style="position:absolute;left:1.200px;top:-.100px;width:5px;height:5px;box-sizing:border-box;background:#fff;border:.5px solid #9aa0a6"></span></span><span style="color:#e8eaed">var(</span><span style="color:#5b95e8">--tchmi-border-color</span><span style="color:#e8eaed">)</span><span style="color:#e8eaed">;</span></div>
<div style="position:absolute;left:792.20px;top:345.50px;height:8px;font:6.27px/8px &quot;Liberation Mono&quot;,monospace;white-space:pre;"><span style="color:#e8eaed">}</span></div>
<div style="position:absolute;left:789.40px;top:353.90px;width:225.00px;height:0.60px;background:#3c4043;"></div>
<div style="position:absolute;left:792.20px;top:357.80px;height:8px;font:6.27px/8px &quot;Liberation Mono&quot;,monospace;white-space:pre;"><span style="color:#e8eaed">.TcHmi_Controls_Beckhoff_TcHmiDatagrid-</span></div>
<div style="position:absolute;left:1013px;top:357.80px;width:0;height:0"><div style="position:absolute;right:0;top:0;font:6.27px/8px &quot;Liberation Mono&quot;,monospace;color:#c7cacf;text-decoration:underline;text-decoration-thickness:.5px;white-space:pre">Style.css:186</div></div>
<div style="position:absolute;left:792.20px;top:365.70px;height:8px;font:6.27px/8px &quot;Liberation Mono&quot;,monospace;white-space:pre;"><span style="color:#e8eaed">template-cell, .tchmi-datagrid-template-cell {</span></div>
<div style="position:absolute;left:802.00px;top:374.70px;height:8px;font:6.27px/8px &quot;Liberation Mono&quot;,monospace;white-space:pre;"><span style="color:#35d4c7">display</span><span style="color:#e8eaed">:</span><span style="color:#e8eaed"> </span><span style="color:#e8eaed">inline-flex</span><span style="color:#e8eaed">;</span></div>
<div style="position:absolute;left:802.00px;top:382.67px;height:8px;font:6.27px/8px &quot;Liberation Mono&quot;,monospace;white-space:pre;text-decoration:line-through;text-decoration-color:#b4b8bd;text-decoration-thickness:.5px;"><span style="color:#35d4c7">border-top-width</span><span style="color:#e8eaed">:</span><span style="color:#e8eaed"> </span><span style="color:#e8eaed">0px</span><span style="color:#e8eaed">;</span></div>
<div style="position:absolute;left:802.00px;top:390.64px;height:8px;font:6.27px/8px &quot;Liberation Mono&quot;,monospace;white-space:pre;text-decoration:line-through;text-decoration-color:#b4b8bd;text-decoration-thickness:.5px;"><span style="color:#35d4c7">border-left-width</span><span style="color:#e8eaed">:</span><span style="color:#e8eaed"> </span><span style="color:#e8eaed">0px</span><span style="color:#e8eaed">;</span></div>
<div style="position:absolute;left:802.00px;top:398.61px;height:8px;font:6.27px/8px &quot;Liberation Mono&quot;,monospace;white-space:pre;"><span style="color:#35d4c7">white-space</span><span style="color:#e8eaed">:</span><span style="color:#e8eaed"> </span><span style="color:#e8eaed">pre</span><span style="color:#e8eaed">;</span></div>
<div style="position:absolute;left:802.00px;top:406.58px;height:8px;font:6.27px/8px &quot;Liberation Mono&quot;,monospace;white-space:pre;"><span style="color:#35d4c7">border-right</span><span style="color:#e8eaed">:</span><span style="display:inline-block;position:relative;width:7.300px;height:8px;vertical-align:top"><svg style="position:absolute;left:1.600px;top:.9px" width="3.400" height="4.400" viewBox="0 0 3 4"><path d="M.2 .2L2.800 2 .2 3.800z" fill="#a5a9ae"/></svg></span><span style="color:#e8eaed">1px solid</span><span style="color:#e8eaed">;</span></div>
<div style="position:absolute;left:802.00px;top:414.55px;height:8px;font:6.27px/8px &quot;Liberation Mono&quot;,monospace;white-space:pre;"><span style="color:#35d4c7">border-bottom</span><span style="color:#e8eaed">:</span><span style="display:inline-block;position:relative;width:7.300px;height:8px;vertical-align:top"><svg style="position:absolute;left:1.600px;top:.9px" width="3.400" height="4.400" viewBox="0 0 3 4"><path d="M.2 .2L2.800 2 .2 3.800z" fill="#a5a9ae"/></svg></span><span style="color:#e8eaed">1px solid</span><span style="color:#e8eaed">;</span></div>
<div style="position:absolute;left:802.00px;top:422.52px;height:8px;font:6.27px/8px &quot;Liberation Mono&quot;,monospace;white-space:pre;text-decoration:line-through;text-decoration-color:#b4b8bd;text-decoration-thickness:.5px;"><span style="color:#35d4c7">padding</span><span style="color:#e8eaed">:</span><span style="display:inline-block;position:relative;width:7.300px;height:8px;vertical-align:top"><svg style="position:absolute;left:1.600px;top:.9px" width="3.400" height="4.400" viewBox="0 0 3 4"><path d="M.2 .2L2.800 2 .2 3.800z" fill="#a5a9ae"/></svg></span><span style="color:#e8eaed">0</span><span style="color:#e8eaed">;</span></div>
<div style="position:absolute;left:802.00px;top:430.49px;height:8px;font:6.27px/8px &quot;Liberation Mono&quot;,monospace;white-space:pre;text-decoration:line-through;text-decoration-color:#b4b8bd;text-decoration-thickness:.5px;"><span style="color:#35d4c7">height</span><span style="color:#e8eaed">:</span><span style="color:#e8eaed"> </span><span style="color:#e8eaed">100%</span><span style="color:#e8eaed">;</span></div>
<div style="position:absolute;left:802.00px;top:438.46px;height:8px;font:6.27px/8px &quot;Liberation Mono&quot;,monospace;white-space:pre;"><span style="color:#35d4c7">position</span><span style="color:#e8eaed">:</span><span style="color:#e8eaed"> </span><span style="color:#e8eaed">relative</span><span style="color:#e8eaed">;</span></div>
<div style="position:absolute;left:802.00px;top:446.43px;height:8px;font:6.27px/8px &quot;Liberation Mono&quot;,monospace;white-space:pre;"><span style="color:#35d4c7">overflow</span><span style="color:#e8eaed">:</span><span style="display:inline-block;position:relative;width:7.300px;height:8px;vertical-align:top"><svg style="position:absolute;left:1.600px;top:.9px" width="3.400" height="4.400" viewBox="0 0 3 4"><path d="M.2 .2L2.800 2 .2 3.800z" fill="#a5a9ae"/></svg></span><span style="color:#e8eaed">hidden</span><span style="color:#e8eaed">;</span></div>
<div style="position:absolute;left:802.00px;top:454.40px;height:8px;font:6.27px/8px &quot;Liberation Mono&quot;,monospace;white-space:pre;"><span style="color:#35d4c7">text-overflow</span><span style="color:#e8eaed">:</span><span style="color:#e8eaed"> </span><span style="color:#e8eaed">clip</span><span style="color:#e8eaed">;</span></div>
<div style="position:absolute;left:802.00px;top:462.37px;height:8px;font:6.27px/8px &quot;Liberation Mono&quot;,monospace;white-space:pre;"><span style="color:#35d4c7">cursor</span><span style="color:#e8eaed">:</span><span style="color:#e8eaed"> </span><span style="color:#e8eaed">default</span><span style="color:#e8eaed">;</span></div>
<div style="position:absolute;left:802.00px;top:470.34px;height:8px;font:6.27px/8px &quot;Liberation Mono&quot;,monospace;white-space:pre;"><span style="color:#35d4c7">line-height</span><span style="color:#e8eaed">:</span><span style="color:#e8eaed"> </span><span style="color:#e8eaed">normal</span><span style="color:#e8eaed">;</span></div>
<svg style="position:absolute;left:886.500px;top:374.500px" width="6" height="6" viewBox="0 0 6 6"><g fill="#9aa0a6"><rect x="0" y="0" width="1.500" height="6"/><rect x="2.200" y="0" width="1.500" height="6"/><rect x="4.400" y="0" width="1.500" height="6"/></g></svg>
<div style="position:absolute;left:792.20px;top:478.50px;height:8px;font:6.27px/8px &quot;Liberation Mono&quot;,monospace;white-space:pre;"><span style="color:#e8eaed">}</span></div>
<div style="position:absolute;left:789.40px;top:487.40px;width:225.00px;height:0.60px;background:#3c4043;"></div>
<div style="position:absolute;left:792.20px;top:490.40px;height:8px;font:6.27px/8px &quot;Liberation Mono&quot;,monospace;white-space:pre;"><span style="color:#e8eaed">.tchmi-box {</span></div>
<div style="position:absolute;left:1013px;top:490.40px;width:0;height:0"><div style="position:absolute;right:0;top:0;font:6.27px/8px &quot;Liberation Mono&quot;,monospace;color:#c7cacf;text-decoration:underline;text-decoration-thickness:.5px;white-space:pre">Style.css:25</div></div>
<div style="position:absolute;left:802.00px;top:500.00px;height:8px;font:6.27px/8px &quot;Liberation Mono&quot;,monospace;white-space:pre;text-decoration:line-through;text-decoration-color:#b4b8bd;text-decoration-thickness:.5px;"><span style="color:#80868b">-moz-box-sizing</span><span style="color:#80868b">:</span><span style="color:#e8eaed"> </span><span style="color:#80868b">border-box</span><span style="color:#80868b">;</span></div>
<div style="position:absolute;left:802.00px;top:507.90px;height:8px;font:6.27px/8px &quot;Liberation Mono&quot;,monospace;white-space:pre;text-decoration:line-through;text-decoration-color:#b4b8bd;text-decoration-thickness:.5px;"><span style="color:#35d4c7">-webkit-box-sizing</span><span style="color:#e8eaed">:</span><span style="color:#e8eaed"> </span><span style="color:#e8eaed">border-box</span><span style="color:#e8eaed">;</span></div>
<div style="position:absolute;left:802.00px;top:515.80px;height:8px;font:6.27px/8px &quot;Liberation Mono&quot;,monospace;white-space:pre;"><span style="color:#35d4c7">box-sizing</span><span style="color:#e8eaed">:</span><span style="color:#e8eaed"> </span><span style="color:#e8eaed">border-box</span><span style="color:#e8eaed">;</span></div>
</div></div>
<svg style="position:absolute;left:340px;top:36px" width="70" height="100" viewBox="340 36 70 100"><g stroke="#ee1c25" stroke-width="1.400" fill="none" stroke-linecap="round" stroke-linejoin="round"><path d="M346 44.700C348 42.600 355 41.500 359.500 41.800C363.500 42 365 44.500 365.300 48C365.600 52 365.600 57.500 364.200 61C363 63.500 358 64.600 353.500 65C350 65.200 347.300 64.500 346.200 61C345.200 56.500 345.200 49.500 346 44.700z"/><path d="M360.300 65C363 70 366 75 369 80.400C372.200 86.200 375.500 92 378.600 97.800C382 104 385 110.500 388.300 117C391 122 393.500 127 396 131.600"/><path d="M360.300 65.200C359.300 68 359 71.500 358.900 74.600C358.700 78.500 358.500 82.500 358.300 86.600"/><path d="M360.300 65.200C363 67 366 68.300 369 69.200C373 70.600 377.500 71.700 381.500 72.700L381.100 73.700"/></g></svg>
<div style="position:absolute;left:0.00px;top:517.00px;width:347.30px;height:1.00px;background:#c9c9c9;"></div>
<div style="position:absolute;left:347.30px;top:517.20px;width:676.70px;height:0.80px;background:#47494c;"></div>
</body></html>
